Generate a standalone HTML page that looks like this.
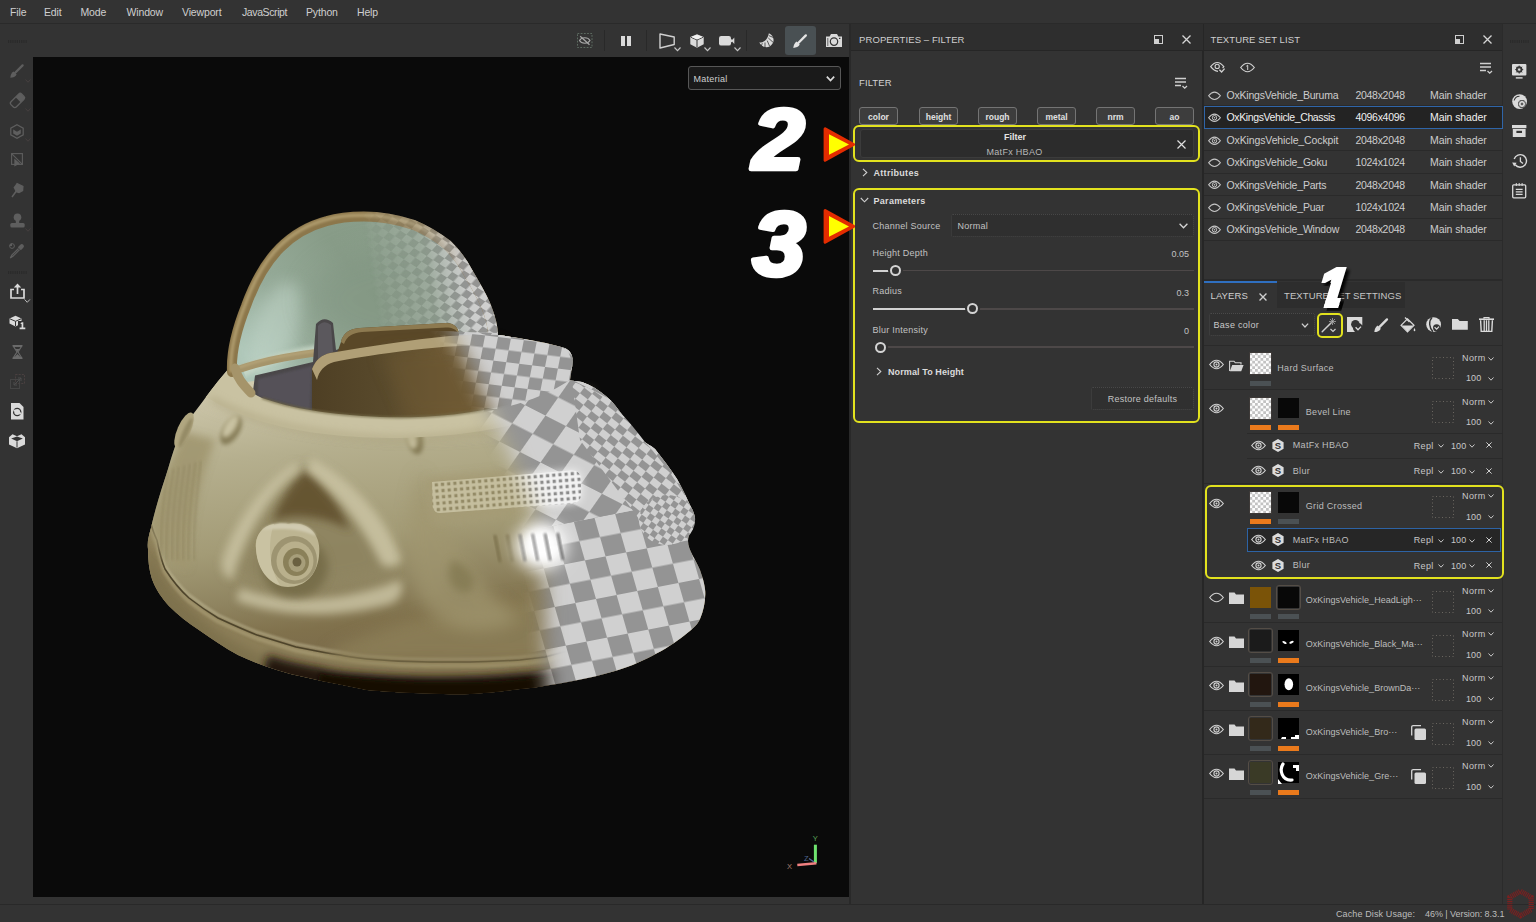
<!DOCTYPE html>
<html lang="en">
<head>
<meta charset="utf-8">
<title>Substance Painter - Filter</title>
<style>
*{box-sizing:border-box;margin:0;padding:0}
html,body{width:1536px;height:922px;overflow:hidden;background:#333;}
body{font-family:"Liberation Sans",sans-serif;font-size:9.5px;color:#c4c4c4;position:relative;-webkit-font-smoothing:antialiased}
.abs{position:absolute}
.t{position:absolute;white-space:nowrap;line-height:12px;height:12px}
#menubar{position:absolute;left:0;top:0;width:1536px;height:23px;background:#333}
#menubar .t{font-size:10.5px;color:#cfcfcf;top:6px;letter-spacing:-0.15px}
#menuline{position:absolute;left:0;top:23px;width:1536px;height:1px;background:#2a2a2a}
#lefttb{position:absolute;left:0;top:24px;width:33px;height:881px;background:#333}
#toptb{position:absolute;left:33px;top:24px;width:816px;height:33px;background:#333}
#viewport{position:absolute;left:33px;top:57px;width:816px;height:840px;background:#0a0a0a;overflow:hidden}
#vpbottom{position:absolute;left:33px;top:897px;width:816px;height:8px;background:#333}
#status{position:absolute;left:0;top:905px;width:1536px;height:17px;background:#333}
#statusline{position:absolute;left:0;top:904.3px;width:1536px;height:1.2px;background:#292929}
.sep{position:absolute;background:#262626}
.paneltitle{position:absolute;height:27px;background:#2e2e2e;border-bottom:1px solid #262626}
.paneltitle .t{top:9.6px;font-size:9.5px;color:#cfcfcf;letter-spacing:0.1px}
.ybox{position:absolute;border:2px solid #e2e21e;border-radius:6px}
.chan{position:absolute;top:107px;width:39px;height:18px;border:1px solid #747474;border-radius:3px;background:#3d3d3d;color:#e0e0e0;font-weight:bold;font-size:8.5px;text-align:center;line-height:19px}
.lbl{color:#c2c2c2;font-size:9px;letter-spacing:0.25px}
.bold{font-weight:bold;color:#dcdcdc}
.track{position:absolute;height:1.3px;margin-top:0.4px;background:#4d4848;left:873.3px;width:320.5px}
.fill{position:absolute;height:2px;background:#d2d2d2;left:873.3px}
.knob{position:absolute;width:11px;height:11px;border:2px solid #d4d4d4;border-radius:50%;background:#333;box-shadow:0 0 0 2px #333}
.tsrow{position:absolute;left:1204px;width:299px;height:22px;border-bottom:1px solid #2a2a2a}
.tsrow .t{top:5px;font-size:10.5px;color:#c8c8c8;letter-spacing:-0.1px}
.lrow{position:absolute;left:1204px;width:299px}
.lsep{position:absolute;height:1px;background:#2a2a2a}
.lt{position:absolute;white-space:nowrap;line-height:12px;height:12px;font-size:9px;color:#bdbdbd;letter-spacing:0.3px}
.num{position:absolute;white-space:nowrap;line-height:12px;height:12px;font-size:9px;color:#c8c8c8;letter-spacing:0.1px}
svg{position:absolute;overflow:visible}
</style>
</head>
<body>
<div id="menubar">
<span class="t" style="left:10px">File</span>
<span class="t" style="left:44px">Edit</span>
<span class="t" style="left:80.5px">Mode</span>
<span class="t" style="left:126.5px">Window</span>
<span class="t" style="left:182px">Viewport</span>
<span class="t" style="left:242px;letter-spacing:-0.4px">JavaScript</span>
<span class="t" style="left:306px">Python</span>
<span class="t" style="left:357px">Help</span>
</div>
<div id="menuline"></div>
<div id="lefttb"></div>
<div id="toptb"></div>
<div id="viewport">
<svg style="left:0;top:0" width="816" height="840" viewBox="33 57 816 840">
<defs>
<filter id="b2" x="-20%" y="-20%" width="140%" height="140%"><feGaussianBlur stdDeviation="2"/></filter>
<filter id="b4" x="-30%" y="-30%" width="160%" height="160%"><feGaussianBlur stdDeviation="4"/></filter>
<filter id="b8" x="-40%" y="-40%" width="180%" height="180%"><feGaussianBlur stdDeviation="8"/></filter>
<filter id="b10" x="-50%" y="-50%" width="200%" height="200%"><feGaussianBlur stdDeviation="10"/></filter>
<filter id="b14" x="-50%" y="-50%" width="200%" height="200%"><feGaussianBlur stdDeviation="14"/></filter>
<filter id="b1" x="-10%" y="-10%" width="120%" height="120%"><feGaussianBlur stdDeviation="0.8"/></filter>
<linearGradient id="bodyg" gradientUnits="userSpaceOnUse" x1="300" y1="380" x2="340" y2="700">
<stop offset="0" stop-color="#cdc7ab"/><stop offset="0.22" stop-color="#b5af8e"/><stop offset="0.5" stop-color="#a39b76"/><stop offset="0.66" stop-color="#8f8460"/><stop offset="0.77" stop-color="#80714c"/><stop offset="0.88" stop-color="#7a6a4a"/><stop offset="1" stop-color="#7a6a4a"/></linearGradient>
<linearGradient id="glassg" gradientUnits="userSpaceOnUse" x1="250" y1="360" x2="430" y2="220">
<stop offset="0" stop-color="#aec6b8"/><stop offset="0.25" stop-color="#96ab99"/><stop offset="0.6" stop-color="#889c88"/><stop offset="1" stop-color="#8a9e8a"/></linearGradient>
<linearGradient id="panelg" gradientUnits="userSpaceOnUse" x1="312" y1="0" x2="500" y2="0">
<stop offset="0" stop-color="#4e3f24"/><stop offset="0.4" stop-color="#594a2c"/><stop offset="0.75" stop-color="#735d36"/><stop offset="1" stop-color="#7c653b"/></linearGradient>
<pattern id="chk" width="42" height="40" patternUnits="userSpaceOnUse" patternTransform="translate(596 599) rotate(-11) skewX(5)">
<rect width="42" height="40" fill="#d0d0d0"/><rect width="21" height="20" fill="#949494"/><rect x="21" y="20" width="21" height="20" fill="#949494"/></pattern>
<pattern id="chkU" width="46" height="44" patternUnits="userSpaceOnUse" patternTransform="translate(520 452) rotate(27) skewX(-8)">
<rect width="46" height="44" fill="#d0d0d0"/><rect width="23" height="22" fill="#949494"/><rect x="23" y="22" width="23" height="22" fill="#949494"/></pattern>
<pattern id="chk2" width="26" height="24" patternUnits="userSpaceOnUse" patternTransform="translate(498 337) rotate(7) skewX(-4)">
<rect width="26" height="24" fill="#d0d0d0"/><rect width="13" height="12" fill="#949494"/><rect x="13" y="12" width="13" height="12" fill="#949494"/></pattern>
<pattern id="chk3" width="15" height="15" patternUnits="userSpaceOnUse" patternTransform="translate(470 230) rotate(32) skewX(-10)">
<rect width="15" height="15" fill="#d0d0d0"/><rect width="7.5" height="7.5" fill="#949494"/><rect x="7.5" y="7.5" width="7.5" height="7.5" fill="#949494"/></pattern>
<pattern id="chk4" width="12" height="12" patternUnits="userSpaceOnUse" patternTransform="translate(660 520) rotate(35)">
<rect width="12" height="12" fill="#d0d0d0"/><rect width="6" height="6" fill="#949494"/><rect x="6" y="6" width="6" height="6" fill="#949494"/></pattern>
<pattern id="chk5" width="20" height="14" patternUnits="userSpaceOnUse" patternTransform="translate(600 400) rotate(38)">
<rect width="20" height="14" fill="#d0d0d0"/><rect width="10" height="7" fill="#949494"/><rect x="10" y="7" width="10" height="7" fill="#949494"/></pattern>
<pattern id="dots" width="6.2" height="6.2" patternUnits="userSpaceOnUse" patternTransform="translate(433 482) rotate(-4.7)">
<rect width="6.2" height="6.2" fill="#cdc7a8"/><rect x="1.5" y="1.5" width="3.2" height="3.2" fill="#8f8662"/></pattern>
<pattern id="dotsw" width="6.2" height="6.2" patternUnits="userSpaceOnUse" patternTransform="translate(433 482) rotate(-4.7)">
<rect width="6.2" height="6.2" fill="#f2f2f2"/><rect x="1.5" y="1.5" width="3.2" height="3.2" fill="#8c8c8c"/></pattern>
<mask id="fm" maskUnits="userSpaceOnUse" x="33" y="57" width="816" height="840"><path d="M432 180 L446 320 L472 372 L505 440 L535 510 L543 580 L546 650 L552 740 L849 740 L849 180Z" fill="#fff" filter="url(#b10)"/></mask>
<linearGradient id="domefade" gradientUnits="userSpaceOnUse" x1="370" y1="280" x2="480" y2="262">
<stop offset="0" stop-color="#fff" stop-opacity="0"/><stop offset="0.15" stop-color="#fff" stop-opacity="0.13"/><stop offset="0.5" stop-color="#fff" stop-opacity="0.3"/><stop offset="0.85" stop-color="#fff" stop-opacity="0.95"/><stop offset="1" stop-color="#fff" stop-opacity="1"/></linearGradient>
<mask id="fmd" maskUnits="userSpaceOnUse" x="33" y="57" width="816" height="840"><rect x="33" y="57" width="816" height="840" fill="url(#domefade)"/></mask>
<clipPath id="bodyclip"><path d="M230 367 C222 376 214 386 206 397 C198 408 188 420 182 430 C176 442 172 455 168 469 C163 485 156 505 151 528 C148 538 147 544 148 549 C148 560 149 570 152 579 C156 590 162 598 169 606 C178 615 188 623 199 630 C212 639 225 648 238 655 C251 661 264 666 277 670 C286 673 295 675 304 677 C316 680 328 682 340 684.5 C349 686.5 358 688 367 690 C388 692 408 693 429 693.5 C443 694 456 694.5 470 694 C488 693 504 691 520 689 C530 688 540 687 550 685 C560 684 566 682 573 681 C588 678 602 675 615 671 C628 667 638 663 648 658 C660 652 672 645 681 638 C690 631 697 626 700 619 C704 609 706 599 705 589 C704 581 702 576 700 570 C696 560 688 550 688 541 C688 533 696 526 695 518 C694 512 692 509 690 505 C686 496 682 488 677 479 C670 468 662 458 655 449 C650 445 646 443 641 440 C634 431 629 424 623 416 C618 409 613 402 607 397 C599 390 591 385 582 382 C577 381 572 381 568 380 C571 372 574 364 572 356 C570 350 566 348 561 347 C540 342 520 338 498 335 L497 333 L400 330 L260 345 Z"/></clipPath>
<clipPath id="glassclip"><path d="M240 361 C239 340 245 318 252 300 C260 280 271 262 284 250 C298 238 312 230 330 225 C342 222 354 221 364 221 C382 221 398 224 412 229 C424 234 434 240 444 248 C452 256 458 264 464 275 C472 288 478 298 482 308 C486 318 488 326 489 336 L489 350 L246 378 Z"/></clipPath>
</defs>
<path d="M230 367 C222 376 214 386 206 397 C198 408 188 420 182 430 C176 442 172 455 168 469 C163 485 156 505 151 528 C148 538 147 544 148 549 C148 560 149 570 152 579 C156 590 162 598 169 606 C178 615 188 623 199 630 C212 639 225 648 238 655 C251 661 264 666 277 670 C286 673 295 675 304 677 C316 680 328 682 340 684.5 C349 686.5 358 688 367 690 C388 692 408 693 429 693.5 C443 694 456 694.5 470 694 C488 693 504 691 520 689 C530 688 540 687 550 685 C560 684 566 682 573 681 C588 678 602 675 615 671 C628 667 638 663 648 658 C660 652 672 645 681 638 C690 631 697 626 700 619 C704 609 706 599 705 589 C704 581 702 576 700 570 C696 560 688 550 688 541 C688 533 696 526 695 518 C694 512 692 509 690 505 C686 496 682 488 677 479 C670 468 662 458 655 449 C650 445 646 443 641 440 C634 431 629 424 623 416 C618 409 613 402 607 397 C599 390 591 385 582 382 C577 381 572 381 568 380 C571 372 574 364 572 356 C570 350 566 348 561 347 C540 342 520 338 498 335 L497 333 L400 330 L260 345 Z" fill="url(#bodyg)"/>
<g clip-path="url(#bodyclip)">
<path d="M150 520 C152 528 154 534 157 540 C159 550 161 560 165 569 C172 580 180 590 189 598 C198 605 208 612 218 618 C231 624 244 630 257 635 C270 639 283 643 296 647 C311 650 325 653 340 655 C349 657 358 658 367 659 C388 661 408 662 429 662 C443 662 456 662 470 662 C487 662 503 661 520 660 C530 659 538 658 545 657 C565 652 585 646 600 640 C618 634 635 627 650 620 C665 612 678 605 690 597 L712 585 L720 720 L130 720 Z" fill="#8c7e58"/>
<path d="M150 545 C160 585 200 625 250 650 C290 668 340 680 400 688 L400 720 L130 720 Z" fill="#7b6f4c" filter="url(#b4)" opacity="0.8"/>
<path d="M268 655 C300 666 350 673 400 675 C450 677 500 675 560 668 L600 660 L610 720 L250 720 Z" fill="#23160a" filter="url(#b4)"/>
<path d="M320 674 C370 681 420 683 470 682 C510 681 540 678 570 673 L575 720 L310 720 Z" fill="#160d05" filter="url(#b2)"/>
<path d="M150 520 C152 528 154 534 157 540 C159 550 161 560 165 569 C172 580 180 590 189 598 C198 605 208 612 218 618 C231 624 244 630 257 635 C270 639 283 643 296 647 C311 650 325 653 340 655 C349 657 358 658 367 659 C388 661 408 662 429 662 C443 662 456 662 470 662 C487 662 503 661 520 660 C530 659 538 658 545 657 C565 652 585 646 600 640 C618 634 635 627 650 620 C665 612 678 605 690 597 L712 585" fill="none" stroke="#c9c2a0" stroke-width="3" opacity="0.5" transform="translate(0 -3)" filter="url(#b1)"/>
<path d="M150 520 C152 528 154 534 157 540 C159 550 161 560 165 569 C172 580 180 590 189 598 C198 605 208 612 218 618 C231 624 244 630 257 635 C270 639 283 643 296 647 C311 650 325 653 340 655 C349 657 358 658 367 659 C388 661 408 662 429 662 C443 662 456 662 470 662 C487 662 503 661 520 660 C530 659 538 658 545 657 C565 652 585 646 600 640 C618 634 635 627 650 620 C665 612 678 605 690 597 L712 585" fill="none" stroke="#a89c74" stroke-width="4" opacity="0.7" transform="translate(0 3.5)" filter="url(#b1)"/>
<path d="M150 520 C152 528 154 534 157 540 C159 550 161 560 165 569 C172 580 180 590 189 598 C198 605 208 612 218 618 C231 624 244 630 257 635 C270 639 283 643 296 647 C311 650 325 653 340 655 C349 657 358 658 367 659 C388 661 408 662 429 662 C443 662 456 662 470 662 C487 662 503 661 520 660 C530 659 538 658 545 657 C565 652 585 646 600 640 C618 634 635 627 650 620 C665 612 678 605 690 597 L712 585" fill="none" stroke="#4a4028" stroke-width="1.5" opacity="0.95"/>
<path d="M205 400 C260 420 360 440 470 432 C520 428 560 410 590 395 L600 380 L230 368 Z" fill="#d2ccb0" filter="url(#b8)" opacity="0.75"/>
<path d="M330 650 C400 618 460 606 540 596 L550 662 L330 664Z" fill="#8d8059" filter="url(#b8)" opacity="0.8"/>
<path d="M150 530 C158 490 170 460 184 432 L215 440 C200 480 190 520 188 570 C175 565 155 555 150 530Z" fill="#a0966f" filter="url(#b4)" opacity="0.9"/>
<path d="M168.0 470.0 C163.0 500 160.0 530 161.0 560" stroke="#857b56" stroke-width="1.4" fill="none" opacity="0.5" filter="url(#b1)"/>
<path d="M173.5 468.5 C168.5 500 165.5 530 166.5 560" stroke="#857b56" stroke-width="1.4" fill="none" opacity="0.5" filter="url(#b1)"/>
<path d="M179.0 467.0 C174.0 500 171.0 530 172.0 560" stroke="#857b56" stroke-width="1.4" fill="none" opacity="0.5" filter="url(#b1)"/>
<path d="M184.5 465.5 C179.5 500 176.5 530 177.5 560" stroke="#857b56" stroke-width="1.4" fill="none" opacity="0.5" filter="url(#b1)"/>
<path d="M190.0 464.0 C185.0 500 182.0 530 183.0 560" stroke="#857b56" stroke-width="1.4" fill="none" opacity="0.5" filter="url(#b1)"/>
<path d="M195.5 462.5 C190.5 500 187.5 530 188.5 560" stroke="#857b56" stroke-width="1.4" fill="none" opacity="0.5" filter="url(#b1)"/>
<path d="M201.0 461.0 C196.0 500 193.0 530 194.0 560" stroke="#857b56" stroke-width="1.4" fill="none" opacity="0.5" filter="url(#b1)"/>
<path d="M306 468 C285 482 250 520 238 574 C260 588 330 594 390 572 C378 530 350 492 306 468Z" fill="#8e8460" filter="url(#b8)" opacity="0.95"/>
<path d="M306 470 C294 480 280 500 272 522 C290 512 326 516 350 530 C340 505 324 484 306 470Z" fill="#5e4d2c" filter="url(#b4)" opacity="0.85"/>
<path d="M306 470 C330 488 360 520 382 565 C390 568 398 566 402 560 C385 515 350 478 312 458Z" fill="#c9c2a2" filter="url(#b4)" opacity="0.9"/>
<path d="M300 470 C275 485 245 530 232 580 C226 578 220 570 222 560 C235 520 265 480 296 462Z" fill="#c9c2a2" filter="url(#b4)" opacity="0.85"/>
<path d="M240 588 C290 606 350 600 400 580 C405 590 400 600 390 604 C340 618 280 618 236 600Z" fill="#c9c2a2" filter="url(#b4)" opacity="0.85"/>
<path d="M420 470 C440 520 470 580 520 620 C480 640 440 630 420 600 C405 560 405 510 420 470Z" fill="#a0966f" filter="url(#b8)" opacity="0.7"/>
<path d="M452 560 C470 566 480 580 470 592 C455 596 442 580 452 560Z" fill="#847a52" filter="url(#b4)" opacity="0.85"/>
<ellipse cx="290" cy="560" rx="33" ry="31" fill="#6f6643" filter="url(#b4)" opacity="0.75" transform="translate(5 7)"/>
<path d="M256 549 C254 531 268 522 288 524 C308 521 322 534 319 556 C317 575 305 587 288 587 C270 587 258 569 256 549Z" fill="#bdb592"/>
<path d="M256 549 C255 535 262 526 274 524 C268 540 268 566 280 585 C266 581 257 567 256 549Z" fill="#c9c2a2"/>
<path d="M262 530 C270 523 282 522 290 524 C300 522 312 527 316 536 C300 528 280 528 262 530Z" fill="#d0cab0" filter="url(#b1)"/>
<ellipse cx="294" cy="560" rx="23" ry="24" fill="#9d9471"/>
<ellipse cx="295" cy="561" rx="18.5" ry="19.5" fill="#b9b08c"/>
<ellipse cx="296" cy="562" rx="13" ry="14" fill="#8a8059"/>
<ellipse cx="297" cy="563" rx="8.5" ry="9" fill="#a79e7a"/>
<ellipse cx="297" cy="562" rx="4.5" ry="4.5" fill="#6a6040"/>
<ellipse cx="232.5" cy="430" rx="8" ry="16" transform="rotate(32 231 428)" fill="#857b56" filter="url(#b2)"/>
<ellipse cx="229.5" cy="426.5" rx="5.5" ry="13" transform="rotate(32 231 428)" fill="#c9c2a2" filter="url(#b2)"/>
<ellipse cx="414.5" cy="439" rx="8" ry="16" transform="rotate(-12 413 437)" fill="#857b56" filter="url(#b2)"/>
<ellipse cx="411.5" cy="435.5" rx="5.5" ry="13" transform="rotate(-12 413 437)" fill="#c9c2a2" filter="url(#b2)"/>
<path d="M426 478 L584 462 L588 506 L432 524Z" fill="#a59b76" filter="url(#b4)" opacity="0.95"/>
<path d="M432 482 L571 470.5 Q581 470 581 480 L581 494 Q581 502.5 572 503.5 L440 513 Q433 513 432.5 505Z" fill="url(#dots)" opacity="0.8"/>
<rect x="495.5" y="534.5" width="3.6" height="28" rx="1.5" fill="#7f7550" transform="rotate(-11 497.3 548)" opacity="0.9" filter="url(#b1)"/>
<rect x="508.2" y="534.1" width="3.6" height="28" rx="1.5" fill="#7f7550" transform="rotate(-11 510.0 548)" opacity="0.9" filter="url(#b1)"/>
<rect x="520.9" y="533.7" width="3.6" height="28" rx="1.5" fill="#7f7550" transform="rotate(-11 522.6999999999999 548)" opacity="0.9" filter="url(#b1)"/>
<rect x="533.6" y="533.3" width="3.6" height="28" rx="1.5" fill="#7f7550" transform="rotate(-11 535.4 548)" opacity="0.9" filter="url(#b1)"/>
<rect x="546.3" y="532.9" width="3.6" height="28" rx="1.5" fill="#7f7550" transform="rotate(-11 548.0999999999999 548)" opacity="0.9" filter="url(#b1)"/>
<rect x="559.0" y="532.5" width="3.6" height="28" rx="1.5" fill="#7f7550" transform="rotate(-11 560.8 548)" opacity="0.9" filter="url(#b1)"/>
</g>
<ellipse cx="184" cy="430" rx="6.5" ry="19" transform="rotate(24 184 430)" fill="#b0a680"/>
<ellipse cx="186.5" cy="432" rx="3" ry="16" transform="rotate(24 184 430)" fill="#8f8560" filter="url(#b1)" opacity="0.8"/>
<path d="M240 361 C239 340 245 318 252 300 C260 280 271 262 284 250 C298 238 312 230 330 225 C342 222 354 221 364 221 C382 221 398 224 412 229 C424 234 434 240 444 248 C452 256 458 264 464 275 C472 288 478 298 482 308 C486 318 488 326 489 336 L489 350 L246 378 Z" fill="url(#glassg)" stroke="url(#glassg)" stroke-width="8" stroke-linejoin="round"/>
<g clip-path="url(#glassclip)">
<ellipse cx="275" cy="330" rx="22" ry="50" transform="rotate(20 275 330)" fill="#c4d8cc" filter="url(#b8)" opacity="0.55"/>
<ellipse cx="400" cy="300" rx="90" ry="50" fill="#829683" filter="url(#b14)" opacity="0.6"/>
<path d="M236 372 C260 356 290 350 322 344 L322 352 C292 356 262 364 240 380Z" fill="#c8d8c8" filter="url(#b2)" opacity="0.9"/>
</g>
<g mask="url(#fmd)"><path d="M229 372 C229 352 234 326 242 304 C250 282 262 260 276 244 C290 230 306 222 325 217 C338 213 351 212 364 212 C382 212 400 216 416 221 C428 226 438 232 450 241 C458 248 466 258 472 270 C480 284 486 294 490 304 C494 314 497 324 497 334 L497 345 L235 380 Z" fill="url(#chk3)"/></g>
<path d="M240 369 C262 361 290 356 322 352" fill="none" stroke="#a5946a" stroke-width="7.5" stroke-linecap="round"/>
<path d="M240 367 C262 359 290 354 322 350" fill="none" stroke="#bcab80" stroke-width="2.5" stroke-linecap="round" opacity="0.7" filter="url(#b1)"/>
<path d="M255 375.5 L313 362 L316 324 Q324 315 333 323 L336 350 L350 345 L440 338 L440 420 L300 420 L252 399Z" fill="#4a4749"/>
<path d="M258 379 L312 366 L310 410 L258 396Z" fill="#545158" filter="url(#b1)"/>
<path d="M318 326 Q324 319 331 325 L333 352 L318 362Z" fill="#5b585d"/>
<path d="M341 342 C343 333 349 329 360 328 L446 323 C454 323 458 327 459 334 L459 352 L336 356Z" fill="#5a4828"/>
<path d="M341 342 C343 333 349 329 360 328 L446 323 C454 323 458 327 459 334 C456 329 452 327.5 446 327.5 L362 332 C352 333 347 336 344 344Z" fill="#8d7a50"/>
<path d="M312 369 C316 359 322 355 330 353 C370 346 410 340 450 336 C470 335 485 335 498 335 C520 338 545 342 561 347 C570 350 574 360 570 380 L566 420 L312 420Z" fill="url(#panelg)"/>
<path d="M380 352 L500 344 L540 420 L410 420Z" fill="#6a5632" filter="url(#b8)" opacity="0.6"/>
<path d="M312 369 C316 359 322 355 330 353 C370 346 410 340 450 336 C470 335 485 335 498 335 C520 338 545 342 561 347 C566 349 570 353 571 358 C556 352 530 348 498 345.5 C470 344.5 440 346.5 400 351.5 C370 355.5 350 358.5 334 362 C324 365 319 371 317 380Z" fill="#b09f76"/>
<path d="M206 397 C214 386 222 376 231 367 C238 382 248 392 262 398 C290 408 330 415 380 417 C440 419 520 411 568 380 L590 386 C560 424 470 436 400 438 C330 438 260 430 206 397Z" fill="#c9c2a2"/>
<path d="M262 398 C290 408 330 415 380 417 C440 419 520 411 568 380" fill="none" stroke="#756b48" stroke-width="2.2" filter="url(#b1)" opacity="0.85"/>
<path d="M210 399 C260 427 330 437 400 439 C470 437 560 425 592 389" fill="none" stroke="#a0966f" stroke-width="5" filter="url(#b4)" opacity="0.6"/>
<path d="M232 372 C231 352 238 326 246 306 C254 284 266 262 280 248 C294 234 308 226 327 221 C340 217 352 216.5 364 216.5 C382 216.5 399 220 414 225 C426 230 436 236 447 244.5 C455 252 462 261 468 272.5 C476 286 482 296 486 306 C490 316 493 325 493 335" fill="none" stroke="#8c774b" stroke-width="10" stroke-linecap="round"/>
<path d="M232 372 C231 352 238 326 246 306 C254 284 266 262 280 248 C294 234 308 226 327 221 C340 217 352 216.5 364 216.5 C382 216.5 399 220 414 225 C426 230 436 236 447 244.5 C455 252 462 261 468 272.5 C476 286 482 296 486 306 C490 316 493 325 493 335" fill="none" stroke="#b5a273" stroke-width="3.5" stroke-linecap="round" transform="translate(-1 -1.2)" opacity="0.8" filter="url(#b1)"/>
<path d="M235 368 C237 378 243 385 251 393" fill="none" stroke="#a5946a" stroke-width="9" stroke-linecap="round"/>
<g mask="url(#fmd)"><path d="M232 372 C231 352 238 326 246 306 C254 284 266 262 280 248 C294 234 308 226 327 221 C340 217 352 216.5 364 216.5 C382 216.5 399 220 414 225 C426 230 436 236 447 244.5 C455 252 462 261 468 272.5 C476 286 482 296 486 306 C490 316 493 325 493 335" fill="none" stroke="url(#chk3)" stroke-width="10" stroke-linecap="round"/></g>
<g mask="url(#fm)">
<path d="M230 367 C222 376 214 386 206 397 C198 408 188 420 182 430 C176 442 172 455 168 469 C163 485 156 505 151 528 C148 538 147 544 148 549 C148 560 149 570 152 579 C156 590 162 598 169 606 C178 615 188 623 199 630 C212 639 225 648 238 655 C251 661 264 666 277 670 C286 673 295 675 304 677 C316 680 328 682 340 684.5 C349 686.5 358 688 367 690 C388 692 408 693 429 693.5 C443 694 456 694.5 470 694 C488 693 504 691 520 689 C530 688 540 687 550 685 C560 684 566 682 573 681 C588 678 602 675 615 671 C628 667 638 663 648 658 C660 652 672 645 681 638 C690 631 697 626 700 619 C704 609 706 599 705 589 C704 581 702 576 700 570 C696 560 688 550 688 541 C688 533 696 526 695 518 C694 512 692 509 690 505 C686 496 682 488 677 479 C670 468 662 458 655 449 C650 445 646 443 641 440 C634 431 629 424 623 416 C618 409 613 402 607 397 C599 390 591 385 582 382 C577 381 572 381 568 380 C571 372 574 364 572 356 C570 350 566 348 561 347 C540 342 520 338 498 335 L497 333 L400 330 L260 345 Z" fill="url(#chk)"/>
<g clip-path="url(#bodyclip)"><path d="M430 330 L720 330 L720 493.4 L430 549.8Z" fill="url(#chkU)"/></g>
<path d="M572 382 C600 388 625 415 645 442 C670 470 690 500 695 518 L640 520 L580 440Z" fill="url(#chk5)"/>
<path d="M440 335 C460 334 480 334 498 335 C520 338 545 342 561 347 C570 350 574 360 570 380 C540 400 500 412 440 418Z" fill="url(#chk2)"/>
<ellipse cx="667" cy="520" rx="28" ry="25" fill="url(#chk4)"/>
<path d="M432 482 L571 470.5 Q581 470 581 480 L581 494 Q581 502.5 572 503.5 L440 513 Q433 513 432.5 505Z" fill="#fff" filter="url(#b4)" opacity="0.85"/>
<path d="M432 482 L571 470.5 Q581 470 581 480 L581 494 Q581 502.5 572 503.5 L440 513 Q433 513 432.5 505Z" fill="url(#dotsw)"/>
</g>
<ellipse cx="541" cy="546" rx="26" ry="24" fill="#fff" filter="url(#b8)" opacity="0.95"/>
<ellipse cx="542" cy="545" rx="16" ry="15" fill="#fff" filter="url(#b4)" opacity="0.95"/>
<rect x="520.9" y="533.7" width="3.2" height="28" rx="1.2" fill="#6a6a6a" opacity="0.55" transform="rotate(-11 522.5 548)" filter="url(#b1)"/>
<rect x="533.6" y="533.3000000000001" width="3.2" height="28" rx="1.2" fill="#6a6a6a" opacity="0.65" transform="rotate(-11 535.2 548)" filter="url(#b1)"/>
<rect x="546.3" y="532.9000000000001" width="3.2" height="28" rx="1.2" fill="#6a6a6a" opacity="0.75" transform="rotate(-11 547.9 548)" filter="url(#b1)"/>
<rect x="559.0" y="532.5" width="3.2" height="28" rx="1.2" fill="#6a6a6a" opacity="0.8500000000000001" transform="rotate(-11 560.6 548)" filter="url(#b1)"/>
</svg>
</div>
<div id="vpbottom"></div>
<!-- separators between panels -->
<div class="sep" style="left:849.4px;top:24px;width:1.8px;height:881px;background:#292929"></div>
<div class="sep" style="left:1202.4px;top:24px;width:1.8px;height:881px;background:#262626"></div>
<div class="sep" style="left:1502px;top:24px;width:1px;height:881px;background:#2b2b2b"></div>
<div id="statusline"></div>
<div id="status">
<span class="t" style="left:1336px;top:3px;font-size:9px;color:#bdbdbd;letter-spacing:0.12px">Cache Disk Usage:</span>
<span class="t" style="left:1425px;top:3px;font-size:9px;color:#bdbdbd;letter-spacing:-0.05px">46% | Version: 8.3.1</span>
</div>
<!-- PROPERTIES PANEL -->
<div class="paneltitle" style="left:851px;top:24px;width:351.5px">
<span class="t" style="left:8px">PROPERTIES – FILTER</span>
</div>
<svg style="left:1154px;top:35px" width="9" height="9" viewBox="0 0 9 9"><rect x="0.5" y="0.5" width="8" height="8" fill="none" stroke="#cfcfcf" stroke-width="1"/><rect x="0" y="4" width="5" height="5" fill="#cfcfcf"/></svg>
<svg style="left:1182px;top:35px" width="9" height="9" viewBox="0 0 9 9"><path d="M0.5 0.5L8.5 8.5M8.5 0.5L0.5 8.5" stroke="#d6d6d6" stroke-width="1.3" fill="none"/></svg>
<span class="t" style="left:859px;top:77px;font-size:9.5px;color:#d2d2d2;letter-spacing:0.1px">FILTER</span>
<svg style="left:1175px;top:77px" width="13" height="13" viewBox="0 0 13 13"><path d="M0 1.5H11M0 5H11M0 8.5H6" stroke="#cfcfcf" stroke-width="1.6" fill="none"/><path d="M7.5 9L9.7 11.2L12 9" stroke="#cfcfcf" stroke-width="1.3" fill="none"/></svg>
<div class="chan" style="left:859px">color</div>
<div class="chan" style="left:919px">height</div>
<div class="chan" style="left:978px">rough</div>
<div class="chan" style="left:1037px">metal</div>
<div class="chan" style="left:1096px">nrm</div>
<div class="chan" style="left:1155px">ao</div>
<!-- filter box -->
<div class="abs" style="left:860px;top:129px;width:334px;height:29px;background:#2c2c2c;border:1px solid #3b3b3b;border-radius:3px"></div>
<span class="t bold" style="left:860px;width:310px;text-align:center;top:130.5px;font-size:9px;color:#e4e4e4">Filter</span>
<span class="t" style="left:860px;width:309px;text-align:center;top:146px;font-size:9px;color:#b8b8b8;letter-spacing:0.3px">MatFx HBAO</span>
<svg style="left:1176.5px;top:139.5px" width="9" height="9" viewBox="0 0 9 9"><path d="M0.5 0.5L8.5 8.5M8.5 0.5L0.5 8.5" stroke="#e0e0e0" stroke-width="1.2" fill="none"/></svg>
<div class="ybox" style="left:853px;top:125px;width:347px;height:37px"></div>
<!-- attributes -->
<svg style="left:862px;top:168px" width="6" height="9" viewBox="0 0 6 9"><path d="M1 0.8L4.8 4.5L1 8.2" stroke="#cfcfcf" stroke-width="1.1" fill="none"/></svg>
<span class="t bold" style="left:873.5px;top:166.5px;font-size:9px;letter-spacing:0.3px">Attributes</span>
<!-- parameters -->
<div class="ybox" style="left:853px;top:188px;width:347px;height:235px"></div>
<svg style="left:860px;top:197px" width="9" height="6" viewBox="0 0 9 6"><path d="M0.8 1L4.5 4.8L8.2 1" stroke="#cfcfcf" stroke-width="1.1" fill="none"/></svg>
<span class="t bold" style="left:873.5px;top:195px;font-size:9px;letter-spacing:0.3px">Parameters</span>
<span class="t lbl" style="left:872.5px;top:220px">Channel Source</span>
<div class="abs" style="left:951px;top:214px;width:243px;height:23px;background:#2f2f2f;border:1px dotted #474747;border-radius:2px"></div>
<span class="t lbl" style="left:957.5px;top:220px">Normal</span>
<svg style="left:1179px;top:223px" width="9" height="6" viewBox="0 0 9 6"><path d="M0.6 0.8L4.5 4.8L8.4 0.8" stroke="#d6d6d6" stroke-width="1.3" fill="none"/></svg>

<span class="t lbl" style="left:872.5px;top:247px">Height Depth</span>
<span class="t lbl" style="left:1139px;width:50px;text-align:right;top:248px;letter-spacing:0px">0.05</span>
<div class="track" style="top:269.5px"></div><div class="fill" style="top:269.5px;width:16.7px"></div>
<div class="knob" style="left:890px;top:265px"></div>

<span class="t lbl" style="left:872.5px;top:285px">Radius</span>
<span class="t lbl" style="left:1139px;width:50px;text-align:right;top:287px;letter-spacing:0px">0.3</span>
<div class="track" style="top:307.9px"></div><div class="fill" style="top:307.9px;width:93.7px"></div>
<div class="knob" style="left:967px;top:303.4px"></div>

<span class="t lbl" style="left:872.5px;top:323.5px">Blur Intensity</span>
<span class="t lbl" style="left:1139px;width:50px;text-align:right;top:325px;letter-spacing:0px">0</span>
<div class="track" style="top:346px"></div>
<div class="knob" style="left:875px;top:341.5px"></div>

<svg style="left:876px;top:367px" width="6" height="9" viewBox="0 0 6 9"><path d="M1 0.8L4.8 4.5L1 8.2" stroke="#cfcfcf" stroke-width="1.1" fill="none"/></svg>
<span class="t bold" style="left:888px;top:366px;font-size:9px;letter-spacing:0.1px">Normal To Height</span>
<div class="abs" style="left:1091px;top:387px;width:103px;height:23px;background:#303030;border:1px dotted #484848;border-radius:2px"></div>
<span class="t lbl" style="left:1091px;width:103px;text-align:center;top:392.5px">Restore defaults</span>
<!-- TEXTURE SET LIST -->
<div class="paneltitle" style="left:1204px;top:24px;width:298px"><span class="t" style="left:6.5px">TEXTURE SET LIST</span></div>
<svg style="left:1455px;top:35px" width="9" height="9" viewBox="0 0 9 9"><rect x="0.5" y="0.5" width="8" height="8" fill="none" stroke="#cfcfcf" stroke-width="1"/><rect x="0" y="4" width="5" height="5" fill="#cfcfcf"/></svg>
<svg style="left:1483px;top:35px" width="9" height="9" viewBox="0 0 9 9"><path d="M0.5 0.5L8.5 8.5M8.5 0.5L0.5 8.5" stroke="#d6d6d6" stroke-width="1.3" fill="none"/></svg>
<svg style="left:1210px;top:61px" width="16" height="13" viewBox="0 0 16 13"><path d="M8 10.3Q4 10 0.7 5.6Q7.2 -2.6 13.8 5.6Q13.2 6.5 12.6 7.1" fill="none" stroke="#d2d2d2" stroke-width="1.2"/><circle cx="7.2" cy="5.4" r="2.1" fill="none" stroke="#d2d2d2" stroke-width="1.1"/><path d="M9.4 8.8L11.6 11L14.6 7.6" stroke="#d2d2d2" stroke-width="1.3" fill="none"/></svg>
<svg style="left:1239.8px;top:61.5px" width="15" height="11" viewBox="0 0 15 11"><path d="M0.7 5.5Q7.5 -3 14.3 5.5Q7.5 14 0.7 5.5Z" fill="none" stroke="#d2d2d2" stroke-width="1.2"/><path d="M6.3 4.2L7.7 3.2V8" stroke="#d2d2d2" stroke-width="1" fill="none"/></svg>
<svg style="left:1479.5px;top:62px" width="13" height="13" viewBox="0 0 13 13"><path d="M0 1.5H11M0 5H11M0 8.5H6" stroke="#cfcfcf" stroke-width="1.6" fill="none"/><path d="M7.5 9L9.7 11.2L12 9" stroke="#cfcfcf" stroke-width="1.3" fill="none"/></svg>
<div class="tsrow" style="top:84.00px;height:22.45px;"></div>
<svg style="left:1208px;top:90.60px" width="13" height="9.5" viewBox="0 0 13 9.5"><path d="M0.6 4.75Q6.5 -2.6 12.4 4.75Q6.5 12.1 0.6 4.75Z" fill="none" stroke="#c6c6c6" stroke-width="1.1"/></svg>
<span class="t" style="left:1226.5px;top:88.70px;font-size:10.5px;color:#cdcdcd;letter-spacing:-0.2px">OxKingsVehicle_Buruma</span>
<span class="t" style="left:1355.5px;top:88.70px;font-size:10.5px;color:#cdcdcd;letter-spacing:-0.3px">2048x2048</span>
<span class="t" style="left:1430px;top:88.70px;font-size:10.5px;color:#cdcdcd;letter-spacing:-0.1px">Main shader</span>
<div class="tsrow" style="top:106.45px;height:22.45px;background:#232323;border:1px solid #2f65a8;"></div>
<svg style="left:1208px;top:113.05px" width="13" height="9.5" viewBox="0 0 13 9.5"><path d="M0.6 4.75Q6.5 -2.6 12.4 4.75Q6.5 12.1 0.6 4.75Z" fill="none" stroke="#c6c6c6" stroke-width="1.1"/><circle cx="6.5" cy="4.75" r="2.2" fill="none" stroke="#c6c6c6" stroke-width="1"/><circle cx="6.5" cy="4.75" r="0.8" fill="#c6c6c6"/></svg>
<span class="t" style="left:1226.5px;top:111.15px;font-size:10.5px;color:#f0f0f0;letter-spacing:-0.38px">OxKingsVehicle_Chassis</span>
<span class="t" style="left:1355.5px;top:111.15px;font-size:10.5px;color:#f0f0f0;letter-spacing:-0.3px">4096x4096</span>
<span class="t" style="left:1430px;top:111.15px;font-size:10.5px;color:#f0f0f0;letter-spacing:-0.1px">Main shader</span>
<div class="tsrow" style="top:128.90px;height:22.45px;"></div>
<svg style="left:1208px;top:135.50px" width="13" height="9.5" viewBox="0 0 13 9.5"><path d="M0.6 4.75Q6.5 -2.6 12.4 4.75Q6.5 12.1 0.6 4.75Z" fill="none" stroke="#c6c6c6" stroke-width="1.1"/><circle cx="6.5" cy="4.75" r="2.2" fill="none" stroke="#c6c6c6" stroke-width="1"/><circle cx="6.5" cy="4.75" r="0.8" fill="#c6c6c6"/></svg>
<span class="t" style="left:1226.5px;top:133.60px;font-size:10.5px;color:#cdcdcd;letter-spacing:-0.12px">OxKingsVehicle_Cockpit</span>
<span class="t" style="left:1355.5px;top:133.60px;font-size:10.5px;color:#cdcdcd;letter-spacing:-0.3px">2048x2048</span>
<span class="t" style="left:1430px;top:133.60px;font-size:10.5px;color:#cdcdcd;letter-spacing:-0.1px">Main shader</span>
<div class="tsrow" style="top:151.35px;height:22.45px;"></div>
<svg style="left:1208px;top:157.95px" width="13" height="9.5" viewBox="0 0 13 9.5"><path d="M0.6 4.75Q6.5 -2.6 12.4 4.75Q6.5 12.1 0.6 4.75Z" fill="none" stroke="#c6c6c6" stroke-width="1.1"/></svg>
<span class="t" style="left:1226.5px;top:156.05px;font-size:10.5px;color:#cdcdcd;letter-spacing:-0.2px">OxKingsVehicle_Goku</span>
<span class="t" style="left:1355.5px;top:156.05px;font-size:10.5px;color:#cdcdcd;letter-spacing:-0.3px">1024x1024</span>
<span class="t" style="left:1430px;top:156.05px;font-size:10.5px;color:#cdcdcd;letter-spacing:-0.1px">Main shader</span>
<div class="tsrow" style="top:173.80px;height:22.45px;"></div>
<svg style="left:1208px;top:180.40px" width="13" height="9.5" viewBox="0 0 13 9.5"><path d="M0.6 4.75Q6.5 -2.6 12.4 4.75Q6.5 12.1 0.6 4.75Z" fill="none" stroke="#c6c6c6" stroke-width="1.1"/><circle cx="6.5" cy="4.75" r="2.2" fill="none" stroke="#c6c6c6" stroke-width="1"/><circle cx="6.5" cy="4.75" r="0.8" fill="#c6c6c6"/></svg>
<span class="t" style="left:1226.5px;top:178.50px;font-size:10.5px;color:#cdcdcd;letter-spacing:-0.2px">OxKingsVehicle_Parts</span>
<span class="t" style="left:1355.5px;top:178.50px;font-size:10.5px;color:#cdcdcd;letter-spacing:-0.3px">2048x2048</span>
<span class="t" style="left:1430px;top:178.50px;font-size:10.5px;color:#cdcdcd;letter-spacing:-0.1px">Main shader</span>
<div class="tsrow" style="top:196.25px;height:22.45px;"></div>
<svg style="left:1208px;top:202.85px" width="13" height="9.5" viewBox="0 0 13 9.5"><path d="M0.6 4.75Q6.5 -2.6 12.4 4.75Q6.5 12.1 0.6 4.75Z" fill="none" stroke="#c6c6c6" stroke-width="1.1"/></svg>
<span class="t" style="left:1226.5px;top:200.95px;font-size:10.5px;color:#cdcdcd;letter-spacing:-0.2px">OxKingsVehicle_Puar</span>
<span class="t" style="left:1355.5px;top:200.95px;font-size:10.5px;color:#cdcdcd;letter-spacing:-0.3px">1024x1024</span>
<span class="t" style="left:1430px;top:200.95px;font-size:10.5px;color:#cdcdcd;letter-spacing:-0.1px">Main shader</span>
<div class="tsrow" style="top:218.70px;height:22.45px;"></div>
<svg style="left:1208px;top:225.30px" width="13" height="9.5" viewBox="0 0 13 9.5"><path d="M0.6 4.75Q6.5 -2.6 12.4 4.75Q6.5 12.1 0.6 4.75Z" fill="none" stroke="#c6c6c6" stroke-width="1.1"/><circle cx="6.5" cy="4.75" r="2.2" fill="none" stroke="#c6c6c6" stroke-width="1"/><circle cx="6.5" cy="4.75" r="0.8" fill="#c6c6c6"/></svg>
<span class="t" style="left:1226.5px;top:223.40px;font-size:10.5px;color:#cdcdcd;letter-spacing:-0.2px">OxKingsVehicle_Window</span>
<span class="t" style="left:1355.5px;top:223.40px;font-size:10.5px;color:#cdcdcd;letter-spacing:-0.3px">2048x2048</span>
<span class="t" style="left:1430px;top:223.40px;font-size:10.5px;color:#cdcdcd;letter-spacing:-0.1px">Main shader</span>
<!-- LAYERS PANEL -->
<div class="lsep" style="left:1204px;top:279px;width:298px;height:2px;background:#2a2a2a"></div>
<div class="abs" style="left:1204px;top:281px;width:73px;height:2px;background:#2f6fc0"></div>
<div class="abs" style="left:1277px;top:282px;width:128px;height:26px;background:#2d2d2d"></div>
<span class="t" style="left:1210.5px;top:290px;font-size:9.5px;color:#d0d0d0;letter-spacing:0.1px">LAYERS</span>
<svg style="left:1259.3px;top:293.0px" width="8" height="8" viewBox="0 0 6 6"><path d="M0.4 0.4L5.6 5.6M5.6 0.4L0.4 5.6" stroke="#d0d0d0" stroke-width="1" fill="none"/></svg>
<span class="t" style="left:1284px;top:290px;font-size:9.5px;color:#c6c6c6;letter-spacing:0.1px">TEXTURE SET SETTINGS</span>
<div class="abs" style="left:1208.5px;top:313px;width:106px;height:23px;background:#303030;border:1px dotted #4a4a4a;border-radius:2px"></div>
<span class="lt" style="left:1213.5px;top:319px;color:#c8c8c8">Base color</span>
<svg style="left:1301.0px;top:322.5px" width="8" height="5" viewBox="0 0 6 4"><path d="M0.5 0.5L3 3.2L5.5 0.5" stroke="#d0d0d0" stroke-width="1" fill="none"/></svg>
<div class="lsep" style="left:1204px;top:345px;width:298px"></div>
<svg style="left:1209.00px;top:359.20px" width="15" height="11" viewBox="0 0 15 11"><path d="M0.7 5.5Q7.5 -3 14.3 5.5Q7.5 14 0.7 5.5Z" fill="none" stroke="#d2d2d2" stroke-width="1.2"/><circle cx="7.5" cy="5.5" r="2.6" fill="none" stroke="#d2d2d2" stroke-width="1.1"/><circle cx="7.5" cy="5.5" r="1" fill="#d2d2d2"/></svg>
<svg style="left:1229.2px;top:360px" width="15" height="12" viewBox="0 0 15 12"><path d="M0.6 11V1.2H5L6.3 2.8H12V4.5" fill="none" stroke="#d6d6d6" stroke-width="1.1"/><path d="M0.8 11.3L3.2 5H14.6L12.2 11.3Z" fill="#d6d6d6"/></svg>
<svg style="left:1249.10px;top:352.30px" width="23" height="23" viewBox="-0.5 -0.5 23 23"><defs><pattern id="tc1" width="5.5" height="5.5" patternUnits="userSpaceOnUse"><rect width="5.5" height="5.5" fill="#fdfdfd"/><rect width="2.75" height="2.75" fill="#c2c2c2"/><rect x="2.75" y="2.75" width="2.75" height="2.75" fill="#c2c2c2"/></pattern></defs><rect x="0" y="0" width="22" height="22" fill="url(#tc1)" stroke="#3d3937" stroke-width="1"/></svg>
<div class="abs" style="left:1250px;top:381px;width:21px;height:4.5px;background:#4b5154"></div>
<span class="lt" style="left:1277.3px;top:361.7px">Hard Surface</span>
<svg style="left:1431.5px;top:357px" width="22" height="22" viewBox="0 0 22 22"><rect x="0.5" y="0.5" width="21" height="21" fill="none" stroke="#6a6660" stroke-width="1" stroke-dasharray="1 2.5"/></svg>
<span class="lt" style="left:1462px;top:351.70px;color:#c8c8c8;letter-spacing:0.4px">Norm</span><svg style="left:1488.3px;top:356.50px" width="6" height="4" viewBox="0 0 6 4"><path d="M0.5 0.5L3 3.2L5.5 0.5" stroke="#c8c8c8" stroke-width="1" fill="none"/></svg><span class="num" style="left:1466px;top:372.20px">100</span><svg style="left:1488.3px;top:377.00px" width="6" height="4" viewBox="0 0 6 4"><path d="M0.5 0.5L3 3.2L5.5 0.5" stroke="#c8c8c8" stroke-width="1" fill="none"/></svg>
<div class="lsep" style="left:1204px;top:389px;width:298px"></div>
<svg style="left:1209.00px;top:403.10px" width="15" height="11" viewBox="0 0 15 11"><path d="M0.7 5.5Q7.5 -3 14.3 5.5Q7.5 14 0.7 5.5Z" fill="none" stroke="#d2d2d2" stroke-width="1.2"/><circle cx="7.5" cy="5.5" r="2.6" fill="none" stroke="#d2d2d2" stroke-width="1.1"/><circle cx="7.5" cy="5.5" r="1" fill="#d2d2d2"/></svg>
<svg style="left:1249.10px;top:396.50px" width="23" height="23" viewBox="-0.5 -0.5 23 23"><defs><pattern id="tc2" width="5.5" height="5.5" patternUnits="userSpaceOnUse"><rect width="5.5" height="5.5" fill="#fdfdfd"/><rect width="2.75" height="2.75" fill="#c2c2c2"/><rect x="2.75" y="2.75" width="2.75" height="2.75" fill="#c2c2c2"/></pattern></defs><rect x="0" y="0" width="22" height="22" fill="url(#tc2)" stroke="#3d3937" stroke-width="1"/></svg>
<div class="abs" style="left:1278.2px;top:397.70px;width:20.7px;height:20.6px;background:#080808"></div>
<div class="abs" style="left:1250px;top:424.8px;width:21px;height:5.2px;background:#ea7a1c"></div>
<div class="abs" style="left:1278.3px;top:424.8px;width:21px;height:5.2px;background:#ea7a1c"></div>
<span class="lt" style="left:1305.8px;top:405.6px">Bevel Line</span>
<svg style="left:1431.5px;top:401px" width="22" height="22" viewBox="0 0 22 22"><rect x="0.5" y="0.5" width="21" height="21" fill="none" stroke="#6a6660" stroke-width="1" stroke-dasharray="1 2.5"/></svg>
<span class="lt" style="left:1462px;top:395.60px;color:#c8c8c8;letter-spacing:0.4px">Norm</span><svg style="left:1488.3px;top:400.40px" width="6" height="4" viewBox="0 0 6 4"><path d="M0.5 0.5L3 3.2L5.5 0.5" stroke="#c8c8c8" stroke-width="1" fill="none"/></svg><span class="num" style="left:1466px;top:416.10px">100</span><svg style="left:1488.3px;top:420.90px" width="6" height="4" viewBox="0 0 6 4"><path d="M0.5 0.5L3 3.2L5.5 0.5" stroke="#c8c8c8" stroke-width="1" fill="none"/></svg>
<div class="lsep" style="left:1246.5px;top:432.5px;width:256px"></div>
<svg style="left:1250.50px;top:439.50px" width="15" height="11" viewBox="0 0 15 11"><path d="M0.7 5.5Q7.5 -3 14.3 5.5Q7.5 14 0.7 5.5Z" fill="none" stroke="#d2d2d2" stroke-width="1.2"/><circle cx="7.5" cy="5.5" r="2.6" fill="none" stroke="#d2d2d2" stroke-width="1.1"/><circle cx="7.5" cy="5.5" r="1" fill="#d2d2d2"/></svg><svg style="left:1271.8px;top:438.5px" width="12" height="13" viewBox="0 0 12 13"><path d="M6 0L11.6 3.25V9.75L6 13L0.4 9.75V3.25Z" fill="#dcdcdc"/><text x="6" y="9.6" text-anchor="middle" font-family="Liberation Sans,sans-serif" font-weight="bold" font-size="9.5" fill="#333">S</text></svg><span class="lt" style="left:1292.8px;top:439px">MatFx HBAO</span><span class="lt" style="left:1413.8px;top:439.5px;color:#c8c8c8">Repl</span><svg style="left:1438.4px;top:444.0px" width="6" height="4" viewBox="0 0 6 4"><path d="M0.5 0.5L3 3.2L5.5 0.5" stroke="#c8c8c8" stroke-width="1" fill="none"/></svg><span class="num" style="left:1451px;top:439.5px">100</span><svg style="left:1469.4px;top:444.0px" width="6" height="4" viewBox="0 0 6 4"><path d="M0.5 0.5L3 3.2L5.5 0.5" stroke="#c8c8c8" stroke-width="1" fill="none"/></svg><svg style="left:1486.3px;top:442.0px" width="6" height="6" viewBox="0 0 6 6"><path d="M0.4 0.4L5.6 5.6M5.6 0.4L0.4 5.6" stroke="#d0d0d0" stroke-width="1" fill="none"/></svg>
<div class="lsep" style="left:1246.5px;top:457.5px;width:256px"></div>
<svg style="left:1250.50px;top:465.00px" width="15" height="11" viewBox="0 0 15 11"><path d="M0.7 5.5Q7.5 -3 14.3 5.5Q7.5 14 0.7 5.5Z" fill="none" stroke="#d2d2d2" stroke-width="1.2"/><circle cx="7.5" cy="5.5" r="2.6" fill="none" stroke="#d2d2d2" stroke-width="1.1"/><circle cx="7.5" cy="5.5" r="1" fill="#d2d2d2"/></svg><svg style="left:1271.8px;top:464.0px" width="12" height="13" viewBox="0 0 12 13"><path d="M6 0L11.6 3.25V9.75L6 13L0.4 9.75V3.25Z" fill="#dcdcdc"/><text x="6" y="9.6" text-anchor="middle" font-family="Liberation Sans,sans-serif" font-weight="bold" font-size="9.5" fill="#333">S</text></svg><span class="lt" style="left:1292.8px;top:464.5px">Blur</span><span class="lt" style="left:1413.8px;top:465.0px;color:#c8c8c8">Repl</span><svg style="left:1438.4px;top:469.5px" width="6" height="4" viewBox="0 0 6 4"><path d="M0.5 0.5L3 3.2L5.5 0.5" stroke="#c8c8c8" stroke-width="1" fill="none"/></svg><span class="num" style="left:1451px;top:465.0px">100</span><svg style="left:1469.4px;top:469.5px" width="6" height="4" viewBox="0 0 6 4"><path d="M0.5 0.5L3 3.2L5.5 0.5" stroke="#c8c8c8" stroke-width="1" fill="none"/></svg><svg style="left:1486.3px;top:467.5px" width="6" height="6" viewBox="0 0 6 6"><path d="M0.4 0.4L5.6 5.6M5.6 0.4L0.4 5.6" stroke="#d0d0d0" stroke-width="1" fill="none"/></svg>
<div class="lsep" style="left:1204px;top:483px;width:298px"></div>
<svg style="left:1209.00px;top:497.70px" width="15" height="11" viewBox="0 0 15 11"><path d="M0.7 5.5Q7.5 -3 14.3 5.5Q7.5 14 0.7 5.5Z" fill="none" stroke="#d2d2d2" stroke-width="1.2"/><circle cx="7.5" cy="5.5" r="2.6" fill="none" stroke="#d2d2d2" stroke-width="1.1"/><circle cx="7.5" cy="5.5" r="1" fill="#d2d2d2"/></svg>
<svg style="left:1249.10px;top:491.00px" width="23" height="23" viewBox="-0.5 -0.5 23 23"><defs><pattern id="tc3" width="5.5" height="5.5" patternUnits="userSpaceOnUse"><rect width="5.5" height="5.5" fill="#fdfdfd"/><rect width="2.75" height="2.75" fill="#c2c2c2"/><rect x="2.75" y="2.75" width="2.75" height="2.75" fill="#c2c2c2"/></pattern></defs><rect x="0" y="0" width="22" height="22" fill="url(#tc3)" stroke="#3d3937" stroke-width="1"/></svg>
<div class="abs" style="left:1278.2px;top:492.20px;width:20.7px;height:20.6px;background:#080808"></div>
<div class="abs" style="left:1250px;top:519.3px;width:21px;height:5.2px;background:#ea7a1c"></div>
<div class="abs" style="left:1278.3px;top:519.3px;width:21px;height:4.5px;background:#4b5154"></div>
<span class="lt" style="left:1305.8px;top:500.2px">Grid Crossed</span>
<svg style="left:1431.5px;top:495.5px" width="22" height="22" viewBox="0 0 22 22"><rect x="0.5" y="0.5" width="21" height="21" fill="none" stroke="#6a6660" stroke-width="1" stroke-dasharray="1 2.5"/></svg>
<span class="lt" style="left:1462px;top:490.40px;color:#c8c8c8;letter-spacing:0.4px">Norm</span><svg style="left:1488.3px;top:494.40px" width="6" height="4" viewBox="0 0 6 4"><path d="M0.5 0.5L3 3.2L5.5 0.5" stroke="#c8c8c8" stroke-width="1" fill="none"/></svg><span class="num" style="left:1466px;top:510.90px">100</span><svg style="left:1488.3px;top:514.90px" width="6" height="4" viewBox="0 0 6 4"><path d="M0.5 0.5L3 3.2L5.5 0.5" stroke="#c8c8c8" stroke-width="1" fill="none"/></svg>
<div class="abs" style="left:1246.5px;top:527.8px;width:254.5px;height:24px;background:#262626;border:1px solid #2d63a5"></div><svg style="left:1250.50px;top:534.30px" width="15" height="11" viewBox="0 0 15 11"><path d="M0.7 5.5Q7.5 -3 14.3 5.5Q7.5 14 0.7 5.5Z" fill="none" stroke="#d2d2d2" stroke-width="1.2"/><circle cx="7.5" cy="5.5" r="2.6" fill="none" stroke="#d2d2d2" stroke-width="1.1"/><circle cx="7.5" cy="5.5" r="1" fill="#d2d2d2"/></svg><svg style="left:1271.8px;top:533.3px" width="12" height="13" viewBox="0 0 12 13"><path d="M6 0L11.6 3.25V9.75L6 13L0.4 9.75V3.25Z" fill="#dcdcdc"/><text x="6" y="9.6" text-anchor="middle" font-family="Liberation Sans,sans-serif" font-weight="bold" font-size="9.5" fill="#333">S</text></svg><span class="lt" style="left:1292.8px;top:533.8px">MatFx HBAO</span><span class="lt" style="left:1413.8px;top:534.3px;color:#c8c8c8">Repl</span><svg style="left:1438.4px;top:538.8px" width="6" height="4" viewBox="0 0 6 4"><path d="M0.5 0.5L3 3.2L5.5 0.5" stroke="#c8c8c8" stroke-width="1" fill="none"/></svg><span class="num" style="left:1451px;top:534.3px">100</span><svg style="left:1469.4px;top:538.8px" width="6" height="4" viewBox="0 0 6 4"><path d="M0.5 0.5L3 3.2L5.5 0.5" stroke="#c8c8c8" stroke-width="1" fill="none"/></svg><svg style="left:1486.3px;top:536.8px" width="6" height="6" viewBox="0 0 6 6"><path d="M0.4 0.4L5.6 5.6M5.6 0.4L0.4 5.6" stroke="#d0d0d0" stroke-width="1" fill="none"/></svg>
<svg style="left:1250.50px;top:559.50px" width="15" height="11" viewBox="0 0 15 11"><path d="M0.7 5.5Q7.5 -3 14.3 5.5Q7.5 14 0.7 5.5Z" fill="none" stroke="#d2d2d2" stroke-width="1.2"/><circle cx="7.5" cy="5.5" r="2.6" fill="none" stroke="#d2d2d2" stroke-width="1.1"/><circle cx="7.5" cy="5.5" r="1" fill="#d2d2d2"/></svg><svg style="left:1271.8px;top:558.5px" width="12" height="13" viewBox="0 0 12 13"><path d="M6 0L11.6 3.25V9.75L6 13L0.4 9.75V3.25Z" fill="#dcdcdc"/><text x="6" y="9.6" text-anchor="middle" font-family="Liberation Sans,sans-serif" font-weight="bold" font-size="9.5" fill="#333">S</text></svg><span class="lt" style="left:1292.8px;top:559px">Blur</span><span class="lt" style="left:1413.8px;top:559.5px;color:#c8c8c8">Repl</span><svg style="left:1438.4px;top:564.0px" width="6" height="4" viewBox="0 0 6 4"><path d="M0.5 0.5L3 3.2L5.5 0.5" stroke="#c8c8c8" stroke-width="1" fill="none"/></svg><span class="num" style="left:1451px;top:559.5px">100</span><svg style="left:1469.4px;top:564.0px" width="6" height="4" viewBox="0 0 6 4"><path d="M0.5 0.5L3 3.2L5.5 0.5" stroke="#c8c8c8" stroke-width="1" fill="none"/></svg><svg style="left:1486.3px;top:562.0px" width="6" height="6" viewBox="0 0 6 6"><path d="M0.4 0.4L5.6 5.6M5.6 0.4L0.4 5.6" stroke="#d0d0d0" stroke-width="1" fill="none"/></svg>
<div class="ybox" style="left:1205px;top:484.5px;width:298.5px;height:94px"></div>
<svg style="left:1209.00px;top:592.20px" width="15" height="11" viewBox="0 0 15 11"><path d="M0.7 5.5Q7.5 -3 14.3 5.5Q7.5 14 0.7 5.5Z" fill="none" stroke="#d2d2d2" stroke-width="1.2"/></svg>
<svg style="left:1229.2px;top:592.2px" width="15" height="12" viewBox="0 0 15 12"><path d="M0 0.5H5.5L7 2.5H15V12H0Z" fill="#d6d6d6"/></svg>
<div class="abs" style="left:1250px;top:586.50px;width:21px;height:21px;background:#7a5308"></div>
<div class="abs" style="left:1278.2px;top:586.50px;width:21px;height:21px;background:#080808"></div><div class="abs" style="left:1276.2px;top:584.50px;width:25px;height:25px;border:1px solid #544d46;border-radius:3px"></div>
<div class="abs" style="left:1250px;top:614.2px;width:21px;height:4.5px;background:#4b5154"></div>
<div class="abs" style="left:1278.3px;top:614.2px;width:21px;height:4.5px;background:#4b5154"></div>
<span class="lt" style="left:1305.8px;top:594.2px;letter-spacing:0.02px">OxKingsVehicle_HeadLigh···</span>
<svg style="left:1431.5px;top:590.7px" width="22" height="22" viewBox="0 0 22 22"><rect x="0.5" y="0.5" width="21" height="21" fill="none" stroke="#6a6660" stroke-width="1" stroke-dasharray="1 2.5"/></svg>
<span class="lt" style="left:1462px;top:584.50px;color:#c8c8c8;letter-spacing:0.4px">Norm</span><svg style="left:1488.3px;top:588.50px" width="6" height="4" viewBox="0 0 6 4"><path d="M0.5 0.5L3 3.2L5.5 0.5" stroke="#c8c8c8" stroke-width="1" fill="none"/></svg><span class="num" style="left:1466px;top:605.00px">100</span><svg style="left:1488.3px;top:609.00px" width="6" height="4" viewBox="0 0 6 4"><path d="M0.5 0.5L3 3.2L5.5 0.5" stroke="#c8c8c8" stroke-width="1" fill="none"/></svg>
<div class="lsep" style="left:1204px;top:622.2px;width:298px"></div>
<svg style="left:1209.00px;top:636.15px" width="15" height="11" viewBox="0 0 15 11"><path d="M0.7 5.5Q7.5 -3 14.3 5.5Q7.5 14 0.7 5.5Z" fill="none" stroke="#d2d2d2" stroke-width="1.2"/><circle cx="7.5" cy="5.5" r="2.6" fill="none" stroke="#d2d2d2" stroke-width="1.1"/><circle cx="7.5" cy="5.5" r="1" fill="#d2d2d2"/></svg>
<svg style="left:1229.2px;top:636.1500000000001px" width="15" height="12" viewBox="0 0 15 12"><path d="M0 0.5H5.5L7 2.5H15V12H0Z" fill="#d6d6d6"/></svg>
<div class="abs" style="left:1250px;top:630.45px;width:21px;height:21px;background:#1b1b1b"></div><div class="abs" style="left:1248px;top:628.45px;width:25px;height:25px;border:1px solid #544d46;border-radius:3px"></div>
<div class="abs" style="left:1278.2px;top:630.45px;width:21px;height:21px;background:#000"></div>
<div class="abs" style="left:1250px;top:658.1500000000001px;width:21px;height:4.5px;background:#4b5154"></div>
<div class="abs" style="left:1278.3px;top:658.1500000000001px;width:21px;height:5.2px;background:#ea7a1c"></div>
<span class="lt" style="left:1305.8px;top:638.1500000000001px;letter-spacing:0.02px">OxKingsVehicle_Black_Ma···</span>
<svg style="left:1431.5px;top:634.6500000000001px" width="22" height="22" viewBox="0 0 22 22"><rect x="0.5" y="0.5" width="21" height="21" fill="none" stroke="#6a6660" stroke-width="1" stroke-dasharray="1 2.5"/></svg>
<span class="lt" style="left:1462px;top:628.45px;color:#c8c8c8;letter-spacing:0.4px">Norm</span><svg style="left:1488.3px;top:632.45px" width="6" height="4" viewBox="0 0 6 4"><path d="M0.5 0.5L3 3.2L5.5 0.5" stroke="#c8c8c8" stroke-width="1" fill="none"/></svg><span class="num" style="left:1466px;top:648.95px">100</span><svg style="left:1488.3px;top:652.95px" width="6" height="4" viewBox="0 0 6 4"><path d="M0.5 0.5L3 3.2L5.5 0.5" stroke="#c8c8c8" stroke-width="1" fill="none"/></svg>
<div class="lsep" style="left:1204px;top:666.1500000000001px;width:298px"></div>
<svg style="left:1209.00px;top:680.10px" width="15" height="11" viewBox="0 0 15 11"><path d="M0.7 5.5Q7.5 -3 14.3 5.5Q7.5 14 0.7 5.5Z" fill="none" stroke="#d2d2d2" stroke-width="1.2"/><circle cx="7.5" cy="5.5" r="2.6" fill="none" stroke="#d2d2d2" stroke-width="1.1"/><circle cx="7.5" cy="5.5" r="1" fill="#d2d2d2"/></svg>
<svg style="left:1229.2px;top:680.1px" width="15" height="12" viewBox="0 0 15 12"><path d="M0 0.5H5.5L7 2.5H15V12H0Z" fill="#d6d6d6"/></svg>
<div class="abs" style="left:1250px;top:674.40px;width:21px;height:21px;background:#22160f"></div><div class="abs" style="left:1248px;top:672.40px;width:25px;height:25px;border:1px solid #544d46;border-radius:3px"></div>
<div class="abs" style="left:1278.2px;top:674.40px;width:21px;height:21px;background:#000"></div>
<div class="abs" style="left:1250px;top:702.1px;width:21px;height:4.5px;background:#4b5154"></div>
<div class="abs" style="left:1278.3px;top:702.1px;width:21px;height:5.2px;background:#ea7a1c"></div>
<span class="lt" style="left:1305.8px;top:682.1px;letter-spacing:0.02px">OxKingsVehicle_BrownDa···</span>
<svg style="left:1431.5px;top:678.6px" width="22" height="22" viewBox="0 0 22 22"><rect x="0.5" y="0.5" width="21" height="21" fill="none" stroke="#6a6660" stroke-width="1" stroke-dasharray="1 2.5"/></svg>
<span class="lt" style="left:1462px;top:672.40px;color:#c8c8c8;letter-spacing:0.4px">Norm</span><svg style="left:1488.3px;top:676.40px" width="6" height="4" viewBox="0 0 6 4"><path d="M0.5 0.5L3 3.2L5.5 0.5" stroke="#c8c8c8" stroke-width="1" fill="none"/></svg><span class="num" style="left:1466px;top:692.90px">100</span><svg style="left:1488.3px;top:696.90px" width="6" height="4" viewBox="0 0 6 4"><path d="M0.5 0.5L3 3.2L5.5 0.5" stroke="#c8c8c8" stroke-width="1" fill="none"/></svg>
<div class="lsep" style="left:1204px;top:710.1px;width:298px"></div>
<svg style="left:1209.00px;top:724.05px" width="15" height="11" viewBox="0 0 15 11"><path d="M0.7 5.5Q7.5 -3 14.3 5.5Q7.5 14 0.7 5.5Z" fill="none" stroke="#d2d2d2" stroke-width="1.2"/><circle cx="7.5" cy="5.5" r="2.6" fill="none" stroke="#d2d2d2" stroke-width="1.1"/><circle cx="7.5" cy="5.5" r="1" fill="#d2d2d2"/></svg>
<svg style="left:1229.2px;top:724.0500000000001px" width="15" height="12" viewBox="0 0 15 12"><path d="M0 0.5H5.5L7 2.5H15V12H0Z" fill="#d6d6d6"/></svg>
<div class="abs" style="left:1250px;top:718.35px;width:21px;height:21px;background:#33291a"></div><div class="abs" style="left:1248px;top:716.35px;width:25px;height:25px;border:1px solid #544d46;border-radius:3px"></div>
<div class="abs" style="left:1278.2px;top:718.35px;width:21px;height:21px;background:#000"></div>
<div class="abs" style="left:1250px;top:746.0500000000001px;width:21px;height:4.5px;background:#4b5154"></div>
<div class="abs" style="left:1278.3px;top:746.0500000000001px;width:21px;height:5.2px;background:#ea7a1c"></div>
<span class="lt" style="left:1305.8px;top:726.0500000000001px;letter-spacing:0.02px">OxKingsVehicle_Bro···</span>
<svg style="left:1411px;top:725.0500000000001px" width="15" height="15" viewBox="0 0 15 15"><path d="M0.7 10.5V2.2Q0.7 0.7 2.2 0.7H10" fill="none" stroke="#d6d6d6" stroke-width="1.3"/><rect x="3.5" y="3.5" width="11.5" height="11.5" rx="1.5" fill="#d6d6d6"/></svg>
<svg style="left:1431.5px;top:722.5500000000001px" width="22" height="22" viewBox="0 0 22 22"><rect x="0.5" y="0.5" width="21" height="21" fill="none" stroke="#6a6660" stroke-width="1" stroke-dasharray="1 2.5"/></svg>
<span class="lt" style="left:1462px;top:716.35px;color:#c8c8c8;letter-spacing:0.4px">Norm</span><svg style="left:1488.3px;top:720.35px" width="6" height="4" viewBox="0 0 6 4"><path d="M0.5 0.5L3 3.2L5.5 0.5" stroke="#c8c8c8" stroke-width="1" fill="none"/></svg><span class="num" style="left:1466px;top:736.85px">100</span><svg style="left:1488.3px;top:740.85px" width="6" height="4" viewBox="0 0 6 4"><path d="M0.5 0.5L3 3.2L5.5 0.5" stroke="#c8c8c8" stroke-width="1" fill="none"/></svg>
<div class="lsep" style="left:1204px;top:754.0500000000001px;width:298px"></div>
<svg style="left:1209.00px;top:768.00px" width="15" height="11" viewBox="0 0 15 11"><path d="M0.7 5.5Q7.5 -3 14.3 5.5Q7.5 14 0.7 5.5Z" fill="none" stroke="#d2d2d2" stroke-width="1.2"/><circle cx="7.5" cy="5.5" r="2.6" fill="none" stroke="#d2d2d2" stroke-width="1.1"/><circle cx="7.5" cy="5.5" r="1" fill="#d2d2d2"/></svg>
<svg style="left:1229.2px;top:768.0px" width="15" height="12" viewBox="0 0 15 12"><path d="M0 0.5H5.5L7 2.5H15V12H0Z" fill="#d6d6d6"/></svg>
<div class="abs" style="left:1250px;top:762.30px;width:21px;height:21px;background:#3a3a26"></div><div class="abs" style="left:1248px;top:760.30px;width:25px;height:25px;border:1px solid #544d46;border-radius:3px"></div>
<div class="abs" style="left:1278.2px;top:762.30px;width:21px;height:21px;background:#000"></div>
<div class="abs" style="left:1250px;top:790.0px;width:21px;height:4.5px;background:#4b5154"></div>
<div class="abs" style="left:1278.3px;top:790.0px;width:21px;height:5.2px;background:#ea7a1c"></div>
<span class="lt" style="left:1305.8px;top:770.0px;letter-spacing:0.02px">OxKingsVehicle_Gre···</span>
<svg style="left:1411px;top:769.0px" width="15" height="15" viewBox="0 0 15 15"><path d="M0.7 10.5V2.2Q0.7 0.7 2.2 0.7H10" fill="none" stroke="#d6d6d6" stroke-width="1.3"/><rect x="3.5" y="3.5" width="11.5" height="11.5" rx="1.5" fill="#d6d6d6"/></svg>
<svg style="left:1431.5px;top:766.5px" width="22" height="22" viewBox="0 0 22 22"><rect x="0.5" y="0.5" width="21" height="21" fill="none" stroke="#6a6660" stroke-width="1" stroke-dasharray="1 2.5"/></svg>
<span class="lt" style="left:1462px;top:760.30px;color:#c8c8c8;letter-spacing:0.4px">Norm</span><svg style="left:1488.3px;top:764.30px" width="6" height="4" viewBox="0 0 6 4"><path d="M0.5 0.5L3 3.2L5.5 0.5" stroke="#c8c8c8" stroke-width="1" fill="none"/></svg><span class="num" style="left:1466px;top:780.80px">100</span><svg style="left:1488.3px;top:784.80px" width="6" height="4" viewBox="0 0 6 4"><path d="M0.5 0.5L3 3.2L5.5 0.5" stroke="#c8c8c8" stroke-width="1" fill="none"/></svg>
<div class="lsep" style="left:1204px;top:798.0px;width:298px"></div>
<svg style="left:1278px;top:630px" width="22" height="22" viewBox="0 0 22 22"><ellipse cx="6.5" cy="12.5" rx="2.4" ry="1.1" transform="rotate(30 6.5 12.5)" fill="#fff"/><ellipse cx="13.5" cy="12.3" rx="2.4" ry="1.1" transform="rotate(-25 13.5 12.3)" fill="#fff"/></svg>
<svg style="left:1278px;top:674px" width="22" height="22" viewBox="0 0 22 22"><ellipse cx="10.8" cy="10.3" rx="4.3" ry="6" fill="#fff"/></svg>
<svg style="left:1278px;top:718px" width="22" height="22" viewBox="0 0 22 22"><path d="M3 21H8V19H4ZM13 21H21V17H17V19H13Z" fill="#fff"/></svg>
<svg style="left:1278px;top:762px" width="22" height="22" viewBox="0 0 22 22"><path d="M5 2C1 8 4 19 14 18" fill="none" stroke="#fff" stroke-width="3.2" stroke-linecap="round"/><path d="M15 3H21V9H18V6H15Z" fill="#fff"/><path d="M0 17L4 22H0Z" fill="#fff"/></svg>
<!-- ICONS -->
<svg style="left:7.5px;top:39.5px" width="19.8" height="3" viewBox="0 0 19.8 3"><rect x="0.0" y="0" width="1.1" height="3" fill="#2a2a2a"/><rect x="2.2" y="0" width="1.1" height="3" fill="#2a2a2a"/><rect x="4.4" y="0" width="1.1" height="3" fill="#2a2a2a"/><rect x="6.6000000000000005" y="0" width="1.1" height="3" fill="#2a2a2a"/><rect x="8.8" y="0" width="1.1" height="3" fill="#2a2a2a"/><rect x="11.0" y="0" width="1.1" height="3" fill="#2a2a2a"/><rect x="13.200000000000001" y="0" width="1.1" height="3" fill="#2a2a2a"/><rect x="15.400000000000002" y="0" width="1.1" height="3" fill="#2a2a2a"/><rect x="17.6" y="0" width="1.1" height="3" fill="#2a2a2a"/></svg>
<svg style="left:10.3px;top:64px" width="14.0" height="14.0" viewBox="0 0 14 14"><path d="M12.6 1.4L5.2 8.8" stroke="#5e5e5e" stroke-width="2.3" stroke-linecap="round" fill="none"/><path d="M3.6 7.4L6.6 10.4C5.6 12.6 3 13.6 0.3 13.7C0.6 11 1.4 8.6 3.6 7.4Z" fill="#5e5e5e"/></svg>
<svg style="left:24.5px;top:78.5px" width="6" height="4" viewBox="0 0 7 4.5"><path d="M0.5 0.5L3.5 3.7L6.5 0.5" stroke="#4a4242" stroke-width="1" fill="none"/></svg>
<svg style="left:9px;top:92px" width="17" height="17" viewBox="0 0 17 17"><g transform="rotate(-45 8.5 8.5)"><rect x="1" y="4.8" width="15" height="7.4" rx="2" fill="none" stroke="#5e5e5e" stroke-width="1.3"/><path d="M9.5 4.8H14Q16 4.8 16 6.8V10.2Q16 12.2 14 12.2H9.5Z" fill="#5e5e5e"/></g></svg>
<svg style="left:24.5px;top:108.0px" width="6" height="4" viewBox="0 0 7 4.5"><path d="M0.5 0.5L3.5 3.7L6.5 0.5" stroke="#4a4242" stroke-width="1" fill="none"/></svg>
<svg style="left:10px;top:123.5px" width="14" height="15" viewBox="0 0 14 15"><path d="M7 0.7L13.2 4.2V10.8L7 14.3L0.8 10.8V4.2Z" fill="none" stroke="#5e5e5e" stroke-width="1.2"/><path d="M3.2 5.5L7 7.7L10.8 5.5V9.5L7 11.7L3.2 9.5Z" fill="#5e5e5e"/></svg>
<svg style="left:24.5px;top:138.0px" width="6" height="4" viewBox="0 0 7 4.5"><path d="M0.5 0.5L3.5 3.7L6.5 0.5" stroke="#4a4242" stroke-width="1" fill="none"/></svg>
<svg style="left:11px;top:153px" width="13" height="14" viewBox="0 0 13 14"><rect x="0.6" y="0.6" width="10.8" height="10.8" fill="none" stroke="#5e5e5e" stroke-width="1.1"/><path d="M0.6 0.6L11.4 11.4" stroke="#5e5e5e" stroke-width="1.1"/><path d="M3.3 5.5L3.3 13.5L9 10.5Z" fill="#5e5e5e"/></svg>
<svg style="left:10.5px;top:183px" width="13" height="15" viewBox="0 0 13 15"><path d="M5.5 0.5L11.8 3.5L11.5 7.5L8 9.5L5 8.5L1 14" stroke="#5e5e5e" stroke-width="1.5" fill="none"/><path d="M5.5 0.5L12 3.5L11.5 7.6L8 9.6L4.6 8.4L2.5 4.5Z" fill="#5e5e5e"/></svg>
<svg style="left:9.5px;top:212.5px" width="15" height="15" viewBox="0 0 15 15"><circle cx="7.5" cy="4.2" r="3.8" fill="#5e5e5e"/><rect x="5.8" y="6" width="3.4" height="5" fill="#5e5e5e"/><rect x="0.3" y="10" width="14.4" height="4.6" rx="1.6" fill="#5e5e5e"/></svg>
<svg style="left:24.5px;top:228.0px" width="6" height="4" viewBox="0 0 7 4.5"><path d="M0.5 0.5L3.5 3.7L6.5 0.5" stroke="#4a4242" stroke-width="1" fill="none"/></svg>
<svg style="left:9px;top:242.5px" width="16" height="16" viewBox="0 0 16 16"><circle cx="3" cy="3" r="2.4" fill="none" stroke="#5e5e5e" stroke-width="1"/><path d="M3 0.6A2.4 2.4 0 0 0 0.6 3H3Z" fill="#5e5e5e"/><path d="M14.3 1.7Q15.8 3.2 14.3 4.7L11.8 7.2L8.8 4.2L11.3 1.7Q12.8 0.2 14.3 1.7Z" fill="#5e5e5e"/><path d="M9.5 5.5L2.8 12.2L1.3 15L3.9 13.3L10.6 6.6" fill="none" stroke="#5e5e5e" stroke-width="1.2"/></svg>
<svg style="left:7.5px;top:271.2px" width="19.8" height="3" viewBox="0 0 19.8 3"><rect x="0.0" y="0" width="1.1" height="3" fill="#2a2a2a"/><rect x="2.2" y="0" width="1.1" height="3" fill="#2a2a2a"/><rect x="4.4" y="0" width="1.1" height="3" fill="#2a2a2a"/><rect x="6.6000000000000005" y="0" width="1.1" height="3" fill="#2a2a2a"/><rect x="8.8" y="0" width="1.1" height="3" fill="#2a2a2a"/><rect x="11.0" y="0" width="1.1" height="3" fill="#2a2a2a"/><rect x="13.200000000000001" y="0" width="1.1" height="3" fill="#2a2a2a"/><rect x="15.400000000000002" y="0" width="1.1" height="3" fill="#2a2a2a"/><rect x="17.6" y="0" width="1.1" height="3" fill="#2a2a2a"/></svg>
<svg style="left:9.5px;top:283px" width="15" height="16" viewBox="0 0 15 16"><path d="M4 6.5H1V15H14V6.5H11" fill="none" stroke="#dadada" stroke-width="1.7"/><path d="M7.5 11V2" stroke="#dadada" stroke-width="1.7" fill="none"/><path d="M3.8 4.6L7.5 0.6L11.2 4.6Z" fill="#dadada"/></svg>
<svg style="left:24.25px;top:299.3px" width="6.5" height="4" viewBox="0 0 7 4.5"><path d="M0.5 0.5L3.5 3.7L6.5 0.5" stroke="#bdbdbd" stroke-width="1.1" fill="none"/></svg>
<svg style="left:9px;top:314.5px" width="17" height="15" viewBox="0 0 17 15"><path d="M0.5 3.5L6.5 0.8L12.5 3.5V8.5L6.5 11.5L0.5 8.5Z" fill="#dadada"/><path d="M0.8 3.8L6.5 6.3L12.2 3.8M6.5 6.3V11" stroke="#333" stroke-width="1" fill="none"/><rect x="9" y="6" width="8" height="9" fill="#333"/><path d="M12.6 7.2H14.3V12.4H16.3V14.2H10.6V12.4H12.6V9H11.3Z" fill="#dadada"/></svg>
<svg style="left:11.5px;top:344.5px" width="11" height="14" viewBox="0 0 11 14"><path d="M0.5 0.7H10.5M0.5 13.3H10.5" stroke="#6a6a6a" stroke-width="1.3"/><path d="M1.5 1.5H9.5L6 7L9.5 12.5H1.5L5 7Z" fill="none" stroke="#6a6a6a" stroke-width="1.1"/><path d="M3.4 4H7.6L5.5 7Z M2.6 12L5.5 9L8.4 12Z" fill="#6a6a6a"/></svg>
<svg style="left:9.5px;top:374px" width="15" height="15" viewBox="0 0 15 15"><rect x="5.5" y="0.5" width="9" height="9" fill="none" stroke="#4a4040" stroke-width="1" stroke-dasharray="2 1.2"/><rect x="0.5" y="5.5" width="9" height="9" fill="none" stroke="#454545" stroke-width="1"/><path d="M4 11L11 4M11 4H8M11 4V7M4 11H7M4 11V8" stroke="#4c4c4c" stroke-width="1" fill="none"/></svg>
<svg style="left:11px;top:403px" width="12.5" height="16.5" viewBox="0 0 12.5 16.5"><path d="M0 0H8.5L12.5 4V16.5H0Z" fill="#dadada"/><circle cx="6.2" cy="9" r="3.6" fill="none" stroke="#333" stroke-width="1.3"/><path d="M2 6.5L5 6.8L3 9.2ZM10.5 11.5L7.4 11.2L9.4 8.8Z" fill="#dadada"/></svg>
<svg style="left:9px;top:434px" width="16" height="14.5" viewBox="0 0 16 14.5"><path d="M8 2.2L12.5 0.3L16 3.2V10.5L8 14.3L0 10.5V3.2L3.5 0.3Z" fill="#dadada"/><path d="M2.2 4.6L8 7.3L13.8 4.6L8 2.6Z" fill="#333"/><path d="M8 7.3V13.6" stroke="#333" stroke-width="1"/></svg>
<svg style="left:577px;top:33px" width="15.5" height="15" viewBox="0 0 15.5 15"><rect x="0.5" y="0.5" width="14.5" height="14" fill="none" stroke="#5c6a60" stroke-width="1" stroke-dasharray="1.8 1.4"/><path d="M2.5 7.5C4.5 3.8 11 3.8 13 7.5C11 11.2 4.5 11.2 2.5 7.5Z" fill="none" stroke="#a8a8a8" stroke-width="1.1"/><path d="M3.2 3.2L12.5 11.8" stroke="#a8a8a8" stroke-width="1.2"/></svg>
<div class="abs" style="left:604px;top:30px;width:1px;height:21px;background:#292929"></div>
<div class="abs" style="left:646px;top:30px;width:1px;height:21px;background:#292929"></div>
<div class="abs" style="left:746px;top:30px;width:1px;height:21px;background:#292929"></div>
<svg style="left:621px;top:35.5px" width="10" height="10" viewBox="0 0 10 10"><rect x="0" y="0" width="4" height="10" fill="#dadada"/><rect x="6" y="0" width="4" height="10" fill="#dadada"/></svg>
<svg style="left:658.5px;top:32.5px" width="16" height="16" viewBox="0 0 16 16"><path d="M1 1L15.2 4V11.5L1 15Z" fill="none" stroke="#d0d0d0" stroke-width="1.4" stroke-linejoin="round"/></svg>
<svg style="left:674.0px;top:47.45px" width="7" height="4.5" viewBox="0 0 7 4.5"><path d="M0.5 0.5L3.5 3.7L6.5 0.5" stroke="#c6c6c6" stroke-width="1.1" fill="none"/></svg>
<svg style="left:690px;top:34px" width="14" height="14" viewBox="0 0 14 14"><path d="M7 0.3L13.7 3V10.3L7 13.7L0.3 10.3V3Z" fill="#dadada"/><path d="M0.8 3.2L7 5.9L13.2 3.2M7 5.9V13.2" stroke="#333" stroke-width="1" fill="none"/><path d="M1.2 3L7 0.8L12.8 3L7 5.4Z" fill="#f0f0f0"/></svg>
<svg style="left:703.8px;top:47.45px" width="7" height="4.5" viewBox="0 0 7 4.5"><path d="M0.5 0.5L3.5 3.7L6.5 0.5" stroke="#c6c6c6" stroke-width="1.1" fill="none"/></svg>
<svg style="left:719.3px;top:35.8px" width="15.5" height="9.6" viewBox="0 0 15.5 9.6"><rect x="0" y="0" width="12" height="9.6" rx="2.2" fill="#dadada"/><path d="M12.4 4.8L15.3 1.6V8L12.4 4.8Z" fill="#dadada"/><rect x="11.8" y="3.4" width="1.4" height="2.8" fill="#dadada"/></svg>
<svg style="left:733.5px;top:47.45px" width="7" height="4.5" viewBox="0 0 7 4.5"><path d="M0.5 0.5L3.5 3.7L6.5 0.5" stroke="#c6c6c6" stroke-width="1.1" fill="none"/></svg>
<svg style="left:759px;top:33px" width="16" height="15" viewBox="759 33 16 15"><path d="M768.9 33.3C774.2 35.5 775.6 42.6 770 46.2C765.8 48.6 761 46.4 759.3 42.2C763.2 43.2 767.6 40 768.9 33.3Z" fill="#dadada"/><path d="M762.3 43.2L761.3 46M765 42.5L765 47.3M767.2 40.6L769.6 46.2M768.3 38L773.2 42.4M768.8 35.6L773.6 37.6" stroke="#333" stroke-width="0.8" fill="none"/></svg>
<div class="abs" style="left:785px;top:25.5px;width:30.5px;height:29.5px;background:#495053;border-radius:3px"></div>
<svg style="left:793.4px;top:33.7px" width="14.280000000000001" height="14.280000000000001" viewBox="0 0 14 14"><path d="M12.6 1.4L5.2 8.8" stroke="#e4e4e4" stroke-width="2.3" stroke-linecap="round" fill="none"/><path d="M3.6 7.4L6.6 10.4C5.6 12.6 3 13.6 0.3 13.7C0.6 11 1.4 8.6 3.6 7.4Z" fill="#e4e4e4"/></svg>
<svg style="left:826px;top:34px" width="16" height="13" viewBox="0 0 16 13"><path d="M0 2.6H3.6L5 0H11L12.4 2.6H16V13H0Z" fill="#dadada"/><circle cx="8" cy="7.6" r="3.7" fill="none" stroke="#333" stroke-width="1.2"/><path d="M1.8 4V12" stroke="#333" stroke-width="0.7"/><rect x="13" y="3.8" width="1.4" height="1.2" fill="#333"/></svg>
<svg style="left:1510px;top:39.5px" width="19.8" height="3" viewBox="0 0 19.8 3"><rect x="0.0" y="0" width="1.1" height="3" fill="#2a2a2a"/><rect x="2.2" y="0" width="1.1" height="3" fill="#2a2a2a"/><rect x="4.4" y="0" width="1.1" height="3" fill="#2a2a2a"/><rect x="6.6000000000000005" y="0" width="1.1" height="3" fill="#2a2a2a"/><rect x="8.8" y="0" width="1.1" height="3" fill="#2a2a2a"/><rect x="11.0" y="0" width="1.1" height="3" fill="#2a2a2a"/><rect x="13.200000000000001" y="0" width="1.1" height="3" fill="#2a2a2a"/><rect x="15.400000000000002" y="0" width="1.1" height="3" fill="#2a2a2a"/><rect x="17.6" y="0" width="1.1" height="3" fill="#2a2a2a"/></svg>
<svg style="left:1512.3px;top:64.3px" width="14.4" height="15" viewBox="0 0 14.4 15"><rect x="0" y="0" width="14.4" height="11.6" rx="1" fill="#dadada"/><rect x="3.8" y="13.2" width="6.8" height="1.4" fill="#dadada"/><circle cx="7.2" cy="5.6" r="2.5" fill="none" stroke="#333" stroke-width="1.5"/><path d="M7.2 1.6V9.6M3.2 5.6H11.2M4.4 2.8L10 8.4M10 2.8L4.4 8.4" stroke="#333" stroke-width="1" fill="none"/><circle cx="7.2" cy="5.6" r="1.2" fill="#dadada"/></svg>
<svg style="left:1512px;top:93.5px" width="15.5" height="15.5" viewBox="0 0 15.5 15.5"><circle cx="7.6" cy="7.6" r="7.4" fill="#dadada"/><path d="M2.2 6.5C2.8 3.8 5 2.3 7.5 2.2" stroke="#333" stroke-width="1.1" fill="none"/><circle cx="10" cy="10" r="3.9" fill="#333"/><circle cx="10" cy="10" r="2.2" fill="none" stroke="#dadada" stroke-width="1.5"/><path d="M10 6.6V13.4M6.6 10H13.4M7.6 7.6L12.4 12.4M12.4 7.6L7.6 12.4" stroke="#dadada" stroke-width="0.9"/><circle cx="10" cy="10" r="1" fill="#333"/></svg>
<svg style="left:1512.3px;top:125px" width="14.4" height="12" viewBox="0 0 14.4 12"><rect x="0" y="0" width="14.4" height="3.2" fill="#dadada"/><rect x="0.8" y="4" width="12.8" height="8" fill="#dadada"/><rect x="4.4" y="5.8" width="5.6" height="2.2" fill="#333"/></svg>
<svg style="left:1511.5px;top:153px" width="16" height="16" viewBox="0 0 16 16"><path d="M3.2 11.8A6.3 6.3 0 1 0 2.2 6" fill="none" stroke="#dadada" stroke-width="1.4"/><path d="M0.2 9.5L4.6 9.8L2.2 13.4Z" fill="#dadada"/><path d="M8.4 4.2V8.4L11 10.6" stroke="#dadada" stroke-width="1.3" fill="none"/></svg>
<svg style="left:1512px;top:182.5px" width="14.5" height="15.5" viewBox="0 0 14.5 15.5"><rect x="0.7" y="1.8" width="13" height="13" rx="1" fill="none" stroke="#dadada" stroke-width="1.3"/><path d="M4.3 0V3M7.2 0V3M10.1 0V3" stroke="#dadada" stroke-width="1"/><path d="M3.8 6.3H10.6M3.8 8.8H10.6M3.8 11.3H10.6" stroke="#dadada" stroke-width="1.2"/></svg>
<div class="ybox" style="left:1317px;top:312.5px;width:26px;height:25.5px;border-radius:5px"></div>
<svg style="left:1321px;top:317px" width="15" height="16" viewBox="0 0 15 16"><path d="M1.2 14.8L10 6" stroke="#cfcfcf" stroke-width="1.5" stroke-linecap="round"/><path d="M11.5 1V8M8 4.5H15M9 2L14 7M14 2L9 7" stroke="#b8b8b8" stroke-width="0.7"/><path d="M9.5 12L12 14.5L14.5 12" stroke="#cfcfcf" stroke-width="1.2" fill="none"/></svg>
<svg style="left:1347.2px;top:317.2px" width="15.3" height="15" viewBox="0 0 15.3 15"><path d="M0 0H15.3V8.5A5 5 0 1 0 8 15H0Z" fill="#dadada"/><circle cx="8.4" cy="7.2" r="4.3" fill="#333"/><path d="M8.6 10.3L11 12.7L14 9.6" stroke="#dadada" stroke-width="1.3" fill="none"/></svg>
<svg style="left:1374.3px;top:317.6px" width="14.42" height="14.42" viewBox="0 0 14 14"><path d="M12.6 1.4L5.2 8.8" stroke="#dadada" stroke-width="2.3" stroke-linecap="round" fill="none"/><path d="M3.6 7.4L6.6 10.4C5.6 12.6 3 13.6 0.3 13.7C0.6 11 1.4 8.6 3.6 7.4Z" fill="#dadada"/></svg>
<svg style="left:1399.5px;top:317px" width="16" height="16" viewBox="0 0 16 16"><path d="M1 8.3L7.5 1.8L14 8.3L7.5 14.8Z" fill="none" stroke="#dadada" stroke-width="1.2"/><path d="M1.6 8.6H13.4L7.5 14.5Z" fill="#dadada"/><path d="M5 0.5L9.5 5" stroke="#dadada" stroke-width="1.2"/><path d="M14.5 11C15.6 12.6 15.6 14.3 14.5 14.3C13.4 14.3 13.4 12.6 14.5 11Z" fill="#dadada"/></svg>
<svg style="left:1425.5px;top:317px" width="16" height="16" viewBox="0 0 16 16"><circle cx="7.6" cy="7.6" r="7.4" fill="#dadada"/><path d="M6 0.5C2.5 4 3 10.5 7 14.8" stroke="#333" stroke-width="1.4" fill="none"/><circle cx="10.6" cy="10.8" r="3.6" fill="#333"/><path d="M8.6 10.2L10.6 12.2L13 9.7" stroke="#dadada" stroke-width="1.2" fill="none"/></svg>
<svg style="left:1451.5px;top:319.3px" width="15.8" height="10.8" viewBox="0 0 15.8 10.8"><path d="M0 0H5.8L7.6 2H15.8V10.8H0Z" fill="#dadada"/></svg>
<svg style="left:1478.6px;top:317.2px" width="15" height="15" viewBox="0 0 15 15"><path d="M0 2.2H15" stroke="#dadada" stroke-width="1.6"/><path d="M5 1.8V0.5H10V1.8" stroke="#dadada" stroke-width="1.2" fill="none"/><path d="M1.6 3.2L2.2 14.4H12.8L13.4 3.2" fill="none" stroke="#dadada" stroke-width="1.4"/><path d="M5.2 3.2V14M7.5 3.2V14M9.8 3.2V14" stroke="#dadada" stroke-width="1.3"/></svg>
<svg style="left:1505px;top:887.5px" width="31" height="31" viewBox="0 0 31 31"><path d="M15.5 3.2L26.2 9.35V21.65L15.5 27.8L4.8 21.65V9.35Z" fill="none" stroke="#7a2020" stroke-width="5.2" stroke-dasharray="1.1 0.8"/></svg>
<svg style="left:780px;top:828px" width="50" height="46" viewBox="780 828 50 46"><path d="M815.4 844.7V863.2" stroke="#6fe36f" stroke-width="3"/><path d="M797.3 865L816.4 863.3" stroke="#f08080" stroke-width="2.6"/><path d="M809 858.5L814 862" stroke="#506a9a" stroke-width="1.4"/><text x="815.4" y="840.5" font-family="Liberation Sans,sans-serif" font-size="7.6" fill="#5aa65a" text-anchor="middle">Y</text><text x="789.5" y="868.7" font-family="Liberation Sans,sans-serif" font-size="7.6" fill="#a8806e" text-anchor="middle">X</text><text x="806.3" y="860.8" font-family="Liberation Sans,sans-serif" font-size="7.6" fill="#4c6592" text-anchor="middle">Z</text></svg>
<div class="abs" style="left:687.5px;top:66.3px;width:153px;height:24.2px;background:#1a1a1a;border:1px solid #575757;border-radius:3px"></div>
<span class="t" style="left:693.5px;top:73px;font-size:9px;color:#cfcfcf;letter-spacing:0.25px">Material</span>
<svg style="left:825.5px;top:75.75px" width="9" height="5.5" viewBox="0 0 7 4.5"><path d="M0.5 0.5L3.5 3.7L6.5 0.5" stroke="#dadada" stroke-width="1.4" fill="none"/></svg>
<!-- ANNOTATIONS -->
<svg style="left:740px;top:95px" width="125" height="200" viewBox="740 95 125 200">
<text x="752.5" y="169.3" font-family="Liberation Sans,sans-serif" font-weight="bold" font-style="italic" font-size="86" fill="#fff" stroke="#fff" stroke-width="4.5" stroke-linejoin="round" textLength="52" lengthAdjust="spacingAndGlyphs">2</text>
<text x="752.5" y="275" font-family="Liberation Sans,sans-serif" font-weight="bold" font-style="italic" font-size="90" fill="#fff" stroke="#fff" stroke-width="4.5" stroke-linejoin="round" textLength="53" lengthAdjust="spacingAndGlyphs">3</text>
<path d="M825.1 128.7L853.6 144.5L825.1 160.3Z" fill="#e32c00" stroke="#e32c00" stroke-width="3" stroke-linejoin="round"/><path d="M829 134.2L849 144.5L829 154.8Z" fill="#ffff00"/>
<path d="M825.1 210.6L853.6 226.4L825.1 242.2Z" fill="#e32c00" stroke="#e32c00" stroke-width="3" stroke-linejoin="round"/><path d="M829 216.1L849 226.4L829 236.7Z" fill="#ffff00"/>
</svg>
<svg style="left:1310px;top:260px" width="60" height="60" viewBox="1310 260 60 60">
<defs><filter id="sh1" x="-50%" y="-50%" width="200%" height="200%"><feGaussianBlur stdDeviation="1.5"/></filter>
<clipPath id="one"><path d="M1320 262H1350V268L1338.2 308H1323.4L1331 283H1320Z"/></clipPath>
<clipPath id="ones"><path d="M1323 265H1353V271L1341.2 311H1326.4L1334 286H1323Z"/></clipPath></defs>
<g clip-path="url(#ones)" filter="url(#sh1)" opacity="0.95"><text x="1318.5" y="309.5" transform="translate(0 309.5) skewX(-6) translate(0 -309.5)" font-family="Liberation Sans,sans-serif" font-weight="bold" font-style="italic" font-size="54" fill="#000" stroke="#000" stroke-width="4">1</text></g>
<g clip-path="url(#one)"><text x="1315.5" y="306.5" transform="translate(0 306.5) skewX(-6) translate(0 -306.5)" font-family="Liberation Sans,sans-serif" font-weight="bold" font-style="italic" font-size="54" fill="#fff" stroke="#fff" stroke-width="4" stroke-linejoin="miter">1</text></g>
</svg>
</body>
</html>
